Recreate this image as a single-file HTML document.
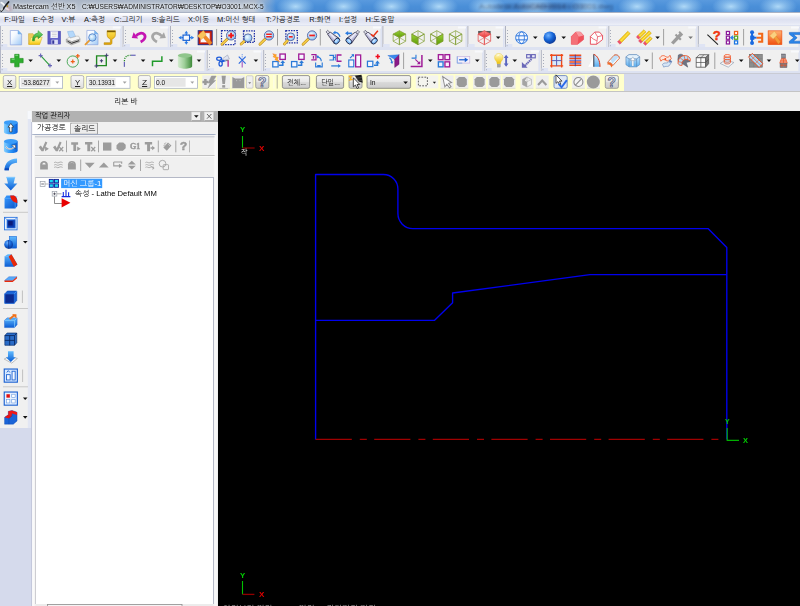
<!DOCTYPE html>
<html lang="ko"><head><meta charset="utf-8"><title>Mastercam</title>
<style>
html,body{margin:0;padding:0}
html{overflow:hidden;width:800px;height:606px}
body{width:800px;height:606px;position:relative;overflow:hidden;background:#f0f0f0;font-family:"Liberation Sans","NanumGothic","Noto Sans CJK KR",sans-serif;font-size:7.5px;color:#000;line-height:1}
.a{position:absolute}
.t{position:absolute;white-space:nowrap;transform-origin:0 0;z-index:2}
svg{position:absolute;overflow:visible}
</style></head><body>
<div class="a" style="left:0px;top:0px;width:800px;height:13px;background:radial-gradient(ellipse 19px 10px at 295.6px 6.5px,rgba(185,224,250,.9),rgba(185,224,250,.45) 45%,rgba(185,224,250,0)),radial-gradient(ellipse 19px 10px at 343.5px 6.5px,rgba(185,224,250,.9),rgba(185,224,250,.45) 45%,rgba(185,224,250,0)),radial-gradient(ellipse 19px 10px at 391.5px 6.5px,rgba(185,224,250,.9),rgba(185,224,250,.45) 45%,rgba(185,224,250,0)),radial-gradient(ellipse 19px 10px at 439px 6.5px,rgba(185,224,250,.9),rgba(185,224,250,.45) 45%,rgba(185,224,250,0)),radial-gradient(ellipse 19px 10px at 487px 6.5px,rgba(185,224,250,.9),rgba(185,224,250,.45) 45%,rgba(185,224,250,0)),radial-gradient(ellipse 19px 10px at 535px 6.5px,rgba(185,224,250,.9),rgba(185,224,250,.45) 45%,rgba(185,224,250,0)),radial-gradient(ellipse 19px 10px at 589px 6.5px,rgba(185,224,250,.9),rgba(185,224,250,.45) 45%,rgba(185,224,250,0)),radial-gradient(ellipse 19px 10px at 637px 6.5px,rgba(185,224,250,.9),rgba(185,224,250,.45) 45%,rgba(185,224,250,0)),radial-gradient(ellipse 19px 10px at 684px 6.5px,rgba(185,224,250,.9),rgba(185,224,250,.45) 45%,rgba(185,224,250,0)),radial-gradient(ellipse 19px 10px at 731px 6.5px,rgba(185,224,250,.9),rgba(185,224,250,.45) 45%,rgba(185,224,250,0)),radial-gradient(ellipse 19px 10px at 778px 6.5px,rgba(185,224,250,.9),rgba(185,224,250,.45) 45%,rgba(185,224,250,0)),linear-gradient(180deg,#5a9ade 0%,#4a8fd8 50%,#4789d2 100%)"></div>
<div class="a" style="left:476px;top:1px;width:140px;height:11px;background:radial-gradient(ellipse 68px 5px at 50% 50%,rgba(40,60,110,.4),rgba(40,60,110,0))"></div>
<div class="a" style="left:0px;top:0px;width:276px;height:13px;background:linear-gradient(90deg,#b3bdcb 0%,#b8c3d3 92%,rgba(184,195,211,0) 100%)"></div>
<div class="a" style="left:0px;top:0px;width:276px;height:13px;background:linear-gradient(180deg,rgba(160,172,190,.5),rgba(255,255,255,0) 45%,rgba(255,255,255,.2) 100%);-webkit-mask-image:linear-gradient(90deg,#000 92%,transparent 100%)"></div>
<div class="t" style="left:13px;top:2.5px;transform:scaleX(0.9685);color:#111;text-shadow:0 0 3px #fff,0 0 4px #fff">Mastercam 선반 X5</div>
<div class="t" style="left:81.75px;top:2.5px;transform:scaleX(0.8790);color:#111;text-shadow:0 0 3px #fff,0 0 4px #fff">C:₩USERS₩ADMINISTRATOR₩DESKTOP₩O3001.MCX-5</div>
<div class="t" style="left:479px;top:3px;transform:scaleX(1.1216);color:rgba(20,30,60,.45);filter:blur(1.1px);font-size:7px">Autodesk AutoCAD 2014 - O3001.dwg</div>
<div class="a" style="left:0px;top:13px;width:800px;height:12px;background:linear-gradient(180deg,#ffffff 0%,#fbfcfe 12%,#e6e9f5 38%,#dde1f1 55%,#e4e7f4 80%,#eceff8 100%)"></div>
<div class="a" style="left:0px;top:12.1px;width:800px;height:0.9px;background:#a9b2c4"></div>
<div class="a" style="left:0px;top:24.5px;width:800px;height:0.8px;background:#c8ccda"></div>
<div class="t" style="left:4.25px;top:15.9px;color:#111">F:파일</div>
<div class="t" style="left:33px;top:15.9px;color:#111">E:수정</div>
<div class="t" style="left:61.5px;top:15.9px;color:#111">V:뷰</div>
<div class="t" style="left:84px;top:15.9px;color:#111">A:측정</div>
<div class="t" style="left:114px;top:15.9px;color:#111">C:그리기</div>
<div class="t" style="left:151.5px;top:15.9px;color:#111">S:솔리드</div>
<div class="t" style="left:188px;top:15.9px;color:#111">X:이동</div>
<div class="t" style="left:217px;top:15.9px;color:#111">M:머신 형태</div>
<div class="t" style="left:265.8px;top:15.9px;color:#111">T:가공경로</div>
<div class="t" style="left:309.3px;top:15.9px;color:#111">R:화면</div>
<div class="t" style="left:339px;top:15.9px;color:#111">I:설정</div>
<div class="t" style="left:365.6px;top:15.9px;color:#111">H:도움말</div>
<div class="a" style="left:0px;top:25px;width:800px;height:48px;background:#dde2f1"></div>
<div class="a" style="left:0px;top:25.5px;width:800px;height:21.5px;background:#f0f0f0"></div>
<div class="a" style="left:0px;top:49.5px;width:800px;height:21.5px;background:#f0f0f0"></div>
<div class="a" style="left:0px;top:73px;width:800px;height:18.5px;background:#d5daec"></div>
<div class="a" style="left:0px;top:73px;width:623.5px;height:18.5px;background:#ffffcc"></div>
<div class="a" style="left:0px;top:91.5px;width:800px;height:19.5px;background:#f0f0f0"></div>
<div class="t" style="left:114px;top:97.6px;transform:scaleX(1.0157);">리본 바</div>
<div class="a" style="left:0px;top:111px;width:31px;height:495px;background:#d5daec"></div>
<div class="a" style="left:0px;top:111px;width:31px;height:317px;background:#f0f0f0"></div>
<div class="a" style="left:31px;top:111px;width:187px;height:495px;background:#f0f0f0"></div>
<div class="a" style="left:32px;top:111px;width:186px;height:10.5px;background:#b2b2b2"></div>
<div class="t" style="left:35px;top:111.6px;transform:scaleX(0.9426);">작업 관리자</div>
<div class="a" style="left:34.5px;top:177.3px;width:179.6px;height:426.8px;background:#fff;border:1px solid #b4b8c6;border-left:1.4px solid #cdcdd2;border-bottom:none;box-sizing:border-box"></div>
<svg style="left:0px;top:0px" width="12" height="13" viewBox="0 0 12 13" ><path d="M1.2,2.6 C3.5,3.2 5,6 6.3,8.6 L8.6,9.6" stroke="#f4f6f8" stroke-width="1.7" fill="none" stroke-linecap="round"/><path d="M8.6,2 C7,4 5.5,5.5 4.2,7.6 C3.2,9.2 2.4,10.2 1.2,11" stroke="#15171a" stroke-width="1.7" fill="none" stroke-linecap="round"/><path d="M6.4,6.2 L8,4.6 L8.2,6.4 L6.8,7.6Z" fill="#b8960e"/><path d="M1.3,10.6 L2.6,8.4" stroke="#e8e8e8" stroke-width="1.2"/></svg>
<div class="a" style="left:4px;top:4px;width:10px;height:8px;background:radial-gradient(ellipse at 50% 60%,rgba(200,120,130,.35),rgba(200,120,130,0) 70%)"></div>
<div class="a" style="left:0px;top:25.5px;width:0.9px;height:47px;background:#b4b8c6"></div>
<div class="a" style="left:0px;top:72.6px;width:800px;height:0.6px;background:#c9cbd4"></div>
<div class="a" style="left:0px;top:91.1px;width:800px;height:0.7px;background:#c4c4c4"></div>
<div class="a" style="left:217.5px;top:110.5px;width:583px;height:496px;background:#000"></div>
<svg style="left:0px;top:0px" width="800" height="606" viewBox="0 0 800 606" >
<g fill="none" stroke="#0000ee" stroke-width="1.35" stroke-linejoin="round">
<path d="M315.6,439.4 V174.5 H383.4 A14.5,14.5 0 0 1 397.9,189 V213.5 A15,15 0 0 0 412.9,228.6 H708 L726.8,247.4 V439.4"/>
<path d="M315.6,320.3 H434.6 L452.6,302.7 V293 L590,274.65 H726.8"/>
</g>
<path d="M315.6,439.4 H722" fill="none" stroke="#a00000" stroke-width="1.3" stroke-dasharray="36.2 8 7 7.4"/>
<!-- axis at part origin -->
<path d="M727.2,428 V440.3 H739" fill="none" stroke="#00b000" stroke-width="1.2"/>
<!-- top-left gnomon -->
<path d="M242.5,136 V148" stroke="#00c000" stroke-width="1.1" fill="none"/>
<path d="M242.6,148 H254.6" stroke="#700000" stroke-width="1.5" fill="none"/>
<!-- bottom-left gnomon -->
<path d="M242.5,581 V594.4" stroke="#00c000" stroke-width="1.1" fill="none"/>
<path d="M242.6,594.4 H254.4" stroke="#900000" stroke-width="1.3" fill="none"/>
</svg>
<div class="t" style="left:240px;top:126px;transform:scaleX(1.0368);font-weight:bold;font-size:7.5px;color:#00d000">Y</div>
<div class="t" style="left:258.6px;top:144.6px;transform:scaleX(1.0766);font-weight:bold;font-size:7.5px;color:#e00000">X</div>
<div class="t" style="left:241.3px;top:148.6px;transform:scaleX(0.8763);color:#fff;font-size:8px">작</div>
<div class="t" style="left:725px;top:418.2px;transform:scaleX(0.9171);font-weight:bold;font-size:7.5px;color:#00d000">Y</div>
<div class="t" style="left:743px;top:436.7px;transform:scaleX(0.9969);font-weight:bold;font-size:7.5px;color:#00d000">X</div>
<div class="t" style="left:240px;top:571.6px;transform:scaleX(1.0368);font-weight:bold;font-size:7.5px;color:#00d000">Y</div>
<div class="t" style="left:258.6px;top:590.6px;transform:scaleX(1.0766);font-weight:bold;font-size:7.5px;color:#e00000">X</div>
<div class="t" style="left:223px;top:604.6px;transform:scaleX(1.1131);color:#b4b4b4">화면보기:평면&nbsp; WCS:평면&nbsp; T/작업평면:평면</div>
<div class="t" style="left:7px;top:78.6px;transform:scaleX(1.0368);font-size:7.5px;color:#222;text-decoration:underline">X</div>
<div class="t" style="left:74.8px;top:78.6px;transform:scaleX(1.0368);font-size:7.5px;color:#222;text-decoration:underline">Y</div>
<div class="t" style="left:141.8px;top:78.6px;transform:scaleX(1.1320);font-size:7.5px;color:#222;text-decoration:underline">Z</div>
<div class="t" style="left:22px;top:78.8px;transform:scaleX(0.8170);color:#111">-53.86277</div>
<div class="t" style="left:88.6px;top:78.8px;transform:scaleX(0.8308);color:#111">30.13931</div>
<div class="t" style="left:156.4px;top:78.8px;transform:scaleX(0.8814);color:#111">0.0</div>
<div class="t" style="left:286.5px;top:78.6px;transform:scaleX(0.9332);color:#111">전체...</div>
<div class="t" style="left:320.5px;top:78.6px;transform:scaleX(0.9332);color:#111">단일...</div>
<div class="t" style="left:369.8px;top:78.7px;transform:scaleX(0.8938);color:#111">In</div>
<div class="t" style="left:36.9px;top:124.3px;transform:scaleX(1.0176);color:#000">가공경로</div>
<div class="t" style="left:73.6px;top:125.2px;transform:scaleX(1.0115);color:#000">솔리드</div>
<div class="t" style="left:130.3px;top:142.2px;transform:scaleX(0.8858);font-family:Liberation Serif,serif;font-weight:bold;font-size:9px;color:#9a9a9a;-webkit-text-stroke:.45px #9a9a9a">G1</div>
<div class="t" style="left:180.4px;top:141.2px;transform:scaleX(1.0691);font-weight:bold;font-size:11px;color:#9a9a9a;-webkit-text-stroke:.5px #9a9a9a">?</div>
<div class="t" style="left:62.5px;top:179.9px;transform:scaleX(1.0392);color:#fff">머신 그룹-1</div>
<div class="t" style="left:74.6px;top:189.9px;transform:scaleX(1.0229);color:#000">속성 - Lathe Default MM</div>
<svg style="left:0;top:0" width="800" height="606" viewBox="0 0 800 606"><defs><linearGradient id="gDoc" x1="0" y1="0" x2="1" y2="1"><stop offset="0" stop-color="#ffffff"/><stop offset="0.35" stop-color="#f4f9ff"/><stop offset="1" stop-color="#9cc8f6"/></linearGradient><linearGradient id="gFold" x1="0" y1="0" x2="0" y2="1"><stop offset="0" stop-color="#fff6b0"/><stop offset="0.5" stop-color="#fde25a"/><stop offset="1" stop-color="#f4c40c"/></linearGradient><linearGradient id="gGreenArrow" x1="0" y1="0" x2="0" y2="1"><stop offset="0" stop-color="#7fe07f"/><stop offset="1" stop-color="#1f9a1f"/></linearGradient><linearGradient id="gPrinter" x1="0" y1="0" x2="0" y2="1"><stop offset="0" stop-color="#f4f4f4"/><stop offset="1" stop-color="#8e8e8e"/></linearGradient><radialGradient id="gLens" cx="0.4" cy="0.4" r="0.7"><stop offset="0" stop-color="#f2fbff"/><stop offset="1" stop-color="#7db9ee"/></radialGradient><radialGradient id="gSphere" cx="0.38" cy="0.32" r="0.75"><stop offset="0" stop-color="#6fb2ff"/><stop offset="0.5" stop-color="#1565d8"/><stop offset="1" stop-color="#0a2f8a"/></radialGradient><linearGradient id="gYel" x1="0" y1="0" x2="0" y2="1"><stop offset="0" stop-color="#ffe34d"/><stop offset="1" stop-color="#e0a000"/></linearGradient><linearGradient id="gGrn" x1="0" y1="0" x2="0" y2="1"><stop offset="0" stop-color="#9ad23a"/><stop offset="1" stop-color="#5c9e00"/></linearGradient><linearGradient id="gCyl" x1="0" y1="0" x2="1" y2="0"><stop offset="0" stop-color="#d4ecd0"/><stop offset="0.45" stop-color="#9fd09a"/><stop offset="1" stop-color="#3e8a3a"/></linearGradient><linearGradient id="gBlueBox" x1="0" y1="0" x2="0" y2="1"><stop offset="0" stop-color="#6db6ff"/><stop offset="1" stop-color="#0b56c4"/></linearGradient><linearGradient id="gBlueH" x1="0" y1="0" x2="1" y2="0"><stop offset="0" stop-color="#86d0ff"/><stop offset="0.5" stop-color="#2a94f8"/><stop offset="1" stop-color="#0a60d8"/></linearGradient><linearGradient id="gRed" x1="0" y1="0" x2="0" y2="1"><stop offset="0" stop-color="#ff9a9a"/><stop offset="1" stop-color="#e83030"/></linearGradient><linearGradient id="gOrange" x1="0" y1="0" x2="0" y2="1"><stop offset="0" stop-color="#ffb070"/><stop offset="1" stop-color="#f05010"/></linearGradient><linearGradient id="gBulb" x1="0" y1="0" x2="0" y2="1"><stop offset="0" stop-color="#fffbd0"/><stop offset="1" stop-color="#f0c000"/></linearGradient><linearGradient id="gTube" x1="0" y1="0" x2="0" y2="1"><stop offset="0" stop-color="#dff1ff"/><stop offset="1" stop-color="#58aef0"/></linearGradient><linearGradient id="gTele" x1="1" y1="0" x2="0" y2="1"><stop offset="0" stop-color="#1c1a38"/><stop offset="0.28" stop-color="#8886b0"/><stop offset="0.45" stop-color="#f0f0fc"/><stop offset="0.7" stop-color="#8c8ab8"/><stop offset="1" stop-color="#181630"/></linearGradient><linearGradient id="gBtn" x1="0" y1="0" x2="0" y2="1"><stop offset="0" stop-color="#f6f6f6"/><stop offset="0.5" stop-color="#e6e6e6"/><stop offset="0.55" stop-color="#d8d8d8"/><stop offset="1" stop-color="#cccccc"/></linearGradient><linearGradient id="gBtn2" x1="0" y1="0" x2="0" y2="1"><stop offset="0" stop-color="#fafafa"/><stop offset="1" stop-color="#dedede"/></linearGradient><linearGradient id="gBlueV" x1="0" y1="0" x2="0" y2="1"><stop offset="0" stop-color="#62bcff"/><stop offset="1" stop-color="#0a5cd4"/></linearGradient><linearGradient id="gBlueD" x1="0" y1="0" x2="1" y2="1"><stop offset="0" stop-color="#3a9cff"/><stop offset="1" stop-color="#0650c8"/></linearGradient></defs><rect x="0.80" y="44.00" width="6.5" height="3" fill="#dfe4f4"/>
<rect x="2" y="30" width="1" height="1" fill="#a8acba"/>
<rect x="2" y="33" width="1" height="1" fill="#a8acba"/>
<rect x="2" y="36" width="1" height="1" fill="#a8acba"/>
<rect x="2" y="39" width="1" height="1" fill="#a8acba"/>
<rect x="2" y="42" width="1" height="1" fill="#a8acba"/>
<rect x="1.60" y="45.20" width="1" height="1" fill="#a8acba"/>
<rect x="120.20" y="26.50" width="1.6" height="20.50" fill="#dde2f2"/>
<rect x="112.80" y="26.50" width="8" height="2" fill="#f8f9fc"/>
<rect x="122.60" y="26.00" width="1" height="21.00" fill="#aeb2c0"/>
<rect x="123.40" y="44.00" width="6.5" height="3" fill="#dfe4f4"/>
<rect x="125" y="30" width="1" height="1" fill="#a8acba"/>
<rect x="125" y="33" width="1" height="1" fill="#a8acba"/>
<rect x="125" y="36" width="1" height="1" fill="#a8acba"/>
<rect x="125" y="39" width="1" height="1" fill="#a8acba"/>
<rect x="125" y="42" width="1" height="1" fill="#a8acba"/>
<rect x="124.20" y="45.20" width="1" height="1" fill="#a8acba"/>
<rect x="167.70" y="26.50" width="1.6" height="20.50" fill="#dde2f2"/>
<rect x="160.30" y="26.50" width="8" height="2" fill="#f8f9fc"/>
<rect x="170.00" y="26.00" width="1" height="21.00" fill="#aeb2c0"/>
<rect x="170.80" y="44.00" width="6.5" height="3" fill="#dfe4f4"/>
<rect x="172" y="30" width="1" height="1" fill="#a8acba"/>
<rect x="172" y="33" width="1" height="1" fill="#a8acba"/>
<rect x="172" y="36" width="1" height="1" fill="#a8acba"/>
<rect x="172" y="39" width="1" height="1" fill="#a8acba"/>
<rect x="172" y="42" width="1" height="1" fill="#a8acba"/>
<rect x="171.60" y="45.20" width="1" height="1" fill="#a8acba"/>
<rect x="380.40" y="26.50" width="1.6" height="20.50" fill="#dde2f2"/>
<rect x="373.00" y="26.50" width="8" height="2" fill="#f8f9fc"/>
<rect x="382.40" y="26.00" width="1" height="21.00" fill="#aeb2c0"/>
<rect x="383.20" y="44.00" width="6.5" height="3" fill="#dfe4f4"/>
<rect x="465.40" y="26.50" width="1.6" height="20.50" fill="#dde2f2"/>
<rect x="458.00" y="26.50" width="8" height="2" fill="#f8f9fc"/>
<rect x="467.40" y="26.00" width="1" height="21.00" fill="#aeb2c0"/>
<rect x="468.20" y="44.00" width="6.5" height="3" fill="#dfe4f4"/>
<rect x="503.00" y="26.50" width="1.6" height="20.50" fill="#dde2f2"/>
<rect x="495.60" y="26.50" width="8" height="2" fill="#f8f9fc"/>
<rect x="505.00" y="26.00" width="1" height="21.00" fill="#aeb2c0"/>
<rect x="505.80" y="44.00" width="6.5" height="3" fill="#dfe4f4"/>
<rect x="507" y="30" width="1" height="1" fill="#a8acba"/>
<rect x="507" y="33" width="1" height="1" fill="#a8acba"/>
<rect x="507" y="36" width="1" height="1" fill="#a8acba"/>
<rect x="507" y="39" width="1" height="1" fill="#a8acba"/>
<rect x="507" y="42" width="1" height="1" fill="#a8acba"/>
<rect x="506.60" y="45.20" width="1" height="1" fill="#a8acba"/>
<rect x="606.00" y="26.50" width="1.6" height="20.50" fill="#dde2f2"/>
<rect x="598.60" y="26.50" width="8" height="2" fill="#f8f9fc"/>
<rect x="608.30" y="26.00" width="1" height="21.00" fill="#aeb2c0"/>
<rect x="609.10" y="44.00" width="6.5" height="3" fill="#dfe4f4"/>
<rect x="610" y="30" width="1" height="1" fill="#a8acba"/>
<rect x="610" y="33" width="1" height="1" fill="#a8acba"/>
<rect x="610" y="36" width="1" height="1" fill="#a8acba"/>
<rect x="610" y="39" width="1" height="1" fill="#a8acba"/>
<rect x="610" y="42" width="1" height="1" fill="#a8acba"/>
<rect x="609.90" y="45.20" width="1" height="1" fill="#a8acba"/>
<rect x="695.60" y="26.50" width="1.6" height="20.50" fill="#dde2f2"/>
<rect x="688.20" y="26.50" width="8" height="2" fill="#f8f9fc"/>
<rect x="697.80" y="26.00" width="1" height="21.00" fill="#aeb2c0"/>
<rect x="698.60" y="44.00" width="6.5" height="3" fill="#dfe4f4"/>
<rect x="798.40" y="26.50" width="1.6" height="20.50" fill="#dde2f2"/>
<rect x="791.00" y="26.50" width="8" height="2" fill="#f8f9fc"/>
<g transform="translate(8.50 30.20) scale(0.6250)"><path d="M2.9,0.5 H15.2 L21,6.2 V23.5 H2.9 Z" fill="url(#gDoc)" stroke="#8ea4de" stroke-width="1.1" /><path d="M15.2,0.5 V6.2 H21 Z" fill="#7ab8f0" stroke="#6a98dc" stroke-width="0.6" /></g>
<g transform="translate(27.80 30.20) scale(0.6250)"><path d="M1.2,5.5 h7 l2,2.5 h8.5 v14.5 h-17.5z" fill="#ecc85a" stroke="#c8a030" stroke-width="0.8" /><path d="M1.6,22.8 L5,11.5 H23 L19,22.8 Z" fill="url(#gFold)" stroke="#d8ae20" stroke-width="0.8" /><path d="M7.5,17 C7.5,9 11.5,4.8 16.5,4.8 V0.8 L23.8,7.2 L16.5,13.6 V9.8 C13,9.8 10.8,12 10.5,17 Z" fill="url(#gGreenArrow)" stroke="#1d8a1d" stroke-width="0.8" /></g>
<g transform="translate(46.50 30.20) scale(0.6250)"><rect x="2.2" y="1.6" width="20.4" height="20.6" fill="#5a5ac4" stroke="#4848b0" stroke-width="0.8" /><rect x="6.6" y="1.8" width="11.6" height="10.6" fill="#ffffff" stroke="#d0d0e8" stroke-width="0.5" /><path d="M8.4,4.4H16.4M8.4,7H16.4M8.4,9.6H16.4" fill="none" stroke="#b4b4c0" stroke-width="1" /><rect x="8" y="15.2" width="10.2" height="7" fill="#dcdff6" stroke="none" stroke-width="1" /><rect x="9.2" y="16.2" width="3.2" height="5.6" fill="#34349a" stroke="none" stroke-width="1" /></g>
<g transform="translate(65.50 30.20) scale(0.6250)"><path d="M3.2,2.2 L12,1.2 L16,10 L6.6,12.6 Z" fill="#b4d8fb" stroke="#86b0e0" stroke-width="0.8" /><path d="M1,14.5 L6.5,10.8 L7.5,12.6 L16,10.2 L15.5,9.6 L21,9.5 L23.3,14 L10,18.5 Z" fill="#f4f4f4" stroke="#9a9a9a" stroke-width="0.7" /><path d="M1,14.5 L10,18.5 L23.3,14 L23,18.6 L9.2,23.6 L1.4,19.2 Z" fill="#c4c4c4" stroke="#808080" stroke-width="0.7" /><path d="M3.2,17.6 L9.6,21 L21.6,16.8" fill="none" stroke="#202020" stroke-width="1.5" /></g>
<g transform="translate(84.50 30.20) scale(0.6250)"><path d="M3.8,0.4 H16 L21.6,6 V23.2 H3.8 Z" fill="url(#gDoc)" stroke="#8ea4de" stroke-width="1.1" /><path d="M16,0.4 V6 H21.6 Z" fill="#7ab8f0" stroke="#6a98dc" stroke-width="0.6" /><path d="M1.6,22.6 L8.4,16" fill="none" stroke="#e89a30" stroke-width="3" stroke-linecap="round"/><circle cx="12.6" cy="11.6" r="5.9" fill="url(#gLens)" stroke="#5a86cc" stroke-width="1.5" /></g>
<g transform="translate(103.00 30.20) scale(0.6250)"><path d="M6.6,0.8 H19.8 V7.5 C19.8,12.5 15.5,13 14.4,14.6 V19.6 C14.4,22.4 13,23 11,23 H1.8 V20 H11 C11.6,20 11.8,19.8 11.8,19.4 V14.6 C10.5,13 6.6,12.5 6.6,7.5 Z" fill="url(#gYel)" stroke="#b88400" stroke-width="0.9" /><path d="M6.6,2 H19.8" fill="none" stroke="#7a5a00" stroke-width="2.4" /></g>
<g transform="translate(131.90 30.20) scale(0.6250)"><path d="M6.5,9.5 C9.5,4.5 17,3.2 20,7 C23,11 19.5,16 14,19" fill="none" stroke="#c414b2" stroke-width="4.4" /><path d="M2.8,3.2 L-0.2,12.6 L10,13.2 Z" fill="#c414b2" stroke="none" stroke-width="1" /></g>
<g transform="translate(150.70 30.20) scale(0.6250)"><g transform="translate(24 0) scale(-1 1)"><path d="M6.5,9.5 C9.5,4.5 17,3.2 20,7 C23,11 19.5,16 14,19" fill="none" stroke="#a6a6a6" stroke-width="4.4" /><path d="M2.8,3.2 L-0.2,12.6 L10,13.2 Z" fill="#a6a6a6" stroke="none" stroke-width="1" /></g></g>
<g transform="translate(178.80 30.20) scale(0.6250)"><path d="M12,0.8 L15,5.4 H9Z M12,23.4 L15,18.8 H9Z M-0.6,12 L4.2,9 V15Z M24.6,12 L19.8,9 V15Z" fill="#2a7ae6" stroke="none" stroke-width="1" /><path d="M12,5V19 M4,12H20" fill="none" stroke="#2a7ae6" stroke-width="2" /><rect x="6.8" y="7.8" width="10.4" height="8.4" fill="#f4f8fe" stroke="#1a62d4" stroke-width="1.9" /></g>
<g transform="translate(197.80 30.20) scale(0.6250)"><rect x="0.6" y="0.8" width="22.4" height="22.4" fill="#c81c08" stroke="#1a2a8a" stroke-width="1.5" /><rect x="4.2" y="4.4" width="15.2" height="15.2" fill="#f8f8f8" stroke="#e06050" stroke-width="0.8" /><path d="M8.5,11.5 L12.5,8 L23,20 L19,24 Z" fill="#f08828" stroke="#d86c10" stroke-width="0.6" /><path d="M-0.8,9.3 L9,0.2 L13.2,7 L6,15 Z" fill="#f8c45c" stroke="#e8a030" stroke-width="0.6" /></g>
<path d="M216.60,29.00 V45.50" stroke="#a0a0a0" stroke-width="1" fill="none"/>
<g transform="translate(220.90 30.20) scale(0.6250)"><rect x="1" y="0.6" width="21.6" height="22.4" fill="#f6f6f6" stroke="#1c2fa6" stroke-width="2" stroke-dasharray="2.4 1.7"/><path d="M1.80,22.40 L10.76,13.75" fill="none" stroke="#b8861a" stroke-width="4.4" stroke-linecap="round"/><path d="M1.80,22.40 L10.76,13.75" fill="none" stroke="#f4cc48" stroke-width="2.8" stroke-linecap="round"/><circle cx="16.3" cy="8.4" r="7.4" fill="url(#gLens)" stroke="#44589e" stroke-width="1.3" /><path d="M11.8,8.4H20.8M16.3,3.9V12.9" fill="none" stroke="#f01818" stroke-width="3" /></g>
<g transform="translate(240.00 30.20) scale(0.6250)"><rect x="5.6" y="1.2" width="17.4" height="18.4" fill="#f0f0f0" stroke="#1c2fa6" stroke-width="2" stroke-dasharray="2.4 1.7"/><path d="M1.80,22.20 L7.82,16.78" fill="none" stroke="#b8861a" stroke-width="4.4" stroke-linecap="round"/><path d="M1.80,22.20 L7.82,16.78" fill="none" stroke="#f4cc48" stroke-width="2.8" stroke-linecap="round"/><circle cx="12.8" cy="12.3" r="6.4" fill="url(#gLens)" stroke="#44589e" stroke-width="1.3" /></g>
<g transform="translate(258.80 30.20) scale(0.6250)"><path d="M1.80,22.40 L10.76,13.75" fill="none" stroke="#b8861a" stroke-width="4.4" stroke-linecap="round"/><path d="M1.80,22.40 L10.76,13.75" fill="none" stroke="#f4cc48" stroke-width="2.8" stroke-linecap="round"/><circle cx="16.3" cy="8.4" r="7.4" fill="url(#gLens)" stroke="#44589e" stroke-width="1.3" /><path d="M11.8,6.4H20.8M11.8,10.6H20.8" fill="none" stroke="#ee2020" stroke-width="2.3" /></g>
<path d="M277.50,29.00 V45.50" stroke="#a0a0a0" stroke-width="1" fill="none"/>
<g transform="translate(283.10 30.20) scale(0.6250)"><rect x="4.4" y="0.8" width="18.4" height="19.6" fill="#f0f0f0" stroke="#1c2fa6" stroke-width="2" stroke-dasharray="2.4 1.7"/><path d="M2.00,22.20 L7.98,15.46" fill="none" stroke="#b8861a" stroke-width="4.4" stroke-linecap="round"/><path d="M2.00,22.20 L7.98,15.46" fill="none" stroke="#f4cc48" stroke-width="2.8" stroke-linecap="round"/><circle cx="12.3" cy="10.6" r="6.2" fill="url(#gLens)" stroke="#44589e" stroke-width="1.3" /><path d="M9.3,10.6H15.3" fill="none" stroke="#ee2020" stroke-width="2.6" /></g>
<g transform="translate(301.90 30.20) scale(0.6250)"><path d="M1.80,22.40 L10.76,13.75" fill="none" stroke="#b8861a" stroke-width="4.4" stroke-linecap="round"/><path d="M1.80,22.40 L10.76,13.75" fill="none" stroke="#f4cc48" stroke-width="2.8" stroke-linecap="round"/><circle cx="16.3" cy="8.4" r="7.4" fill="url(#gLens)" stroke="#44589e" stroke-width="1.3" /><path d="M11.8,8.4H20.8" fill="none" stroke="#ee2020" stroke-width="2.8" /></g>
<path d="M320.30,29.00 V45.50" stroke="#a0a0a0" stroke-width="1" fill="none"/>
<g transform="translate(325.90 30.20) scale(0.6250)"><path d="M0.2,2.8 L2.8,0.2 L6.4,3.6 L3.6,6.4Z" fill="#d8d8e4" stroke="#2a2a40" stroke-width="0.9" /><path d="M6.9,2.9 L21,13 L13,21 L2.9,6.9 Z" fill="url(#gTele)" stroke="#14142a" stroke-width="1" /><ellipse cx="17.4" cy="17.4" rx="5.4" ry="3.7" transform="rotate(-45 17.4 17.4)" fill="#86c0fa" stroke="#0c1030" stroke-width="1.3"/><ellipse cx="16.6" cy="16.8" rx="2.6" ry="1.6" transform="rotate(-45 16.6 16.8)" fill="#c8e4ff"/><path d="M13.5,4 C17,2.5 21,5 22.5,10.5" fill="none" stroke="#2a7be0" stroke-width="2.2" /><path d="M10.5,5 L15,0.8 L15.6,6.2Z" fill="#2a7be0" stroke="none" stroke-width="1" /></g>
<g transform="translate(344.70 30.20) scale(0.6250)"><g transform="translate(24 0) scale(-1 1)"><path d="M0.2,2.8 L2.8,0.2 L6.4,3.6 L3.6,6.4Z" fill="#d8d8e4" stroke="#2a2a40" stroke-width="0.9" /><path d="M6.9,2.9 L21,13 L13,21 L2.9,6.9 Z" fill="url(#gTele)" stroke="#14142a" stroke-width="1" /><ellipse cx="17.4" cy="17.4" rx="5.4" ry="3.7" transform="rotate(-45 17.4 17.4)" fill="#86c0fa" stroke="#0c1030" stroke-width="1.3"/><ellipse cx="16.6" cy="16.8" rx="2.6" ry="1.6" transform="rotate(-45 16.6 16.8)" fill="#c8e4ff"/></g><path d="M4,5 H11.5" fill="none" stroke="#2a7be0" stroke-width="2.6" /><path d="M0.5,5 L5.5,1.4 V8.6Z" fill="#2a7be0" stroke="none" stroke-width="1" /></g>
<g transform="translate(363.50 30.20) scale(0.6250)"><path d="M0.2,2.8 L2.8,0.2 L6.4,3.6 L3.6,6.4Z" fill="#d8d8e4" stroke="#2a2a40" stroke-width="0.9" /><path d="M6.9,2.9 L21,13 L13,21 L2.9,6.9 Z" fill="url(#gTele)" stroke="#14142a" stroke-width="1" /><ellipse cx="17.4" cy="17.4" rx="5.4" ry="3.7" transform="rotate(-45 17.4 17.4)" fill="#86c0fa" stroke="#0c1030" stroke-width="1.3"/><ellipse cx="16.6" cy="16.8" rx="2.6" ry="1.6" transform="rotate(-45 16.6 16.8)" fill="#c8e4ff"/><path d="M12,6.5 L15.5,9.5 L23,1" fill="none" stroke="#e83010" stroke-width="2.4" /></g>
<g transform="translate(391.90 30.20) scale(0.6250)"><path d="M12,0.8 L22,6.2 L12,11.8 L2,6.2 Z" fill="url(#gGrn)" stroke="none" stroke-width="1" /><path d="M12,0.8 V11.8 M2,17.6 L12,11.8 L22,17.6" fill="none" stroke="#7e9c2e" stroke-width="0.9" /><path d="M12,0.8 L22,6.2 L12,11.8 L2,6.2 ZM2,6.2 L12,11.8 V23.2 L2,17.6 ZM22,6.2 L12,11.8 V23.2 L22,17.6 Z" fill="none" stroke="#7e9c2e" stroke-width="1.15" stroke-linejoin="round"/></g>
<g transform="translate(410.50 30.20) scale(0.6250)"><path d="M2,6.2 L12,11.8 V23.2 L2,17.6 Z" fill="url(#gGrn)" stroke="none" stroke-width="1" /><path d="M12,0.8 V11.8 M2,17.6 L12,11.8 L22,17.6" fill="none" stroke="#7e9c2e" stroke-width="0.9" /><path d="M12,0.8 L22,6.2 L12,11.8 L2,6.2 ZM2,6.2 L12,11.8 V23.2 L2,17.6 ZM22,6.2 L12,11.8 V23.2 L22,17.6 Z" fill="none" stroke="#7e9c2e" stroke-width="1.15" stroke-linejoin="round"/></g>
<g transform="translate(429.30 30.20) scale(0.6250)"><path d="M22,6.2 L12,11.8 V23.2 L22,17.6 Z" fill="url(#gGrn)" stroke="none" stroke-width="1" /><path d="M12,0.8 V11.8 M2,17.6 L12,11.8 L22,17.6" fill="none" stroke="#7e9c2e" stroke-width="0.9" /><path d="M12,0.8 L22,6.2 L12,11.8 L2,6.2 ZM2,6.2 L12,11.8 V23.2 L2,17.6 ZM22,6.2 L12,11.8 V23.2 L22,17.6 Z" fill="none" stroke="#7e9c2e" stroke-width="1.15" stroke-linejoin="round"/></g>
<g transform="translate(448.10 30.20) scale(0.6250)"><path d="M12,0.8 V11.8 M2,17.6 L12,11.8 L22,17.6" fill="none" stroke="#7e9c2e" stroke-width="0.9" /><path d="M12,0.8 L22,6.2 L12,11.8 L2,6.2 ZM2,6.2 L12,11.8 V23.2 L2,17.6 ZM22,6.2 L12,11.8 V23.2 L22,17.6 Z" fill="none" stroke="#7e9c2e" stroke-width="1.15" stroke-linejoin="round"/></g>
<g transform="translate(476.90 30.20) scale(0.6250)"><rect x="2" y="1.2" width="20" height="5.5" fill="#5a5a5a" stroke="none" stroke-width="1" /><path d="M12,0.8 L22,6.2 L12,11.8 L2,6.2 Z" fill="url(#gRed)" stroke="none" stroke-width="1" /><path d="M12,0.8 V11.8 M2,17.6 L12,11.8 L22,17.6" fill="none" stroke="#e45050" stroke-width="0.9" /><path d="M12,0.8 L22,6.2 L12,11.8 L2,6.2 ZM2,6.2 L12,11.8 V23.2 L2,17.6 ZM22,6.2 L12,11.8 V23.2 L22,17.6 Z" fill="none" stroke="#e45050" stroke-width="1.2" stroke-linejoin="round"/></g>
<path d="M495.90,36.40 h4.6 l-2.3,2.6z" fill="#111"/>
<g transform="translate(514.10 30.20) scale(0.6250)"><circle cx="12" cy="12" r="9.5" fill="#f4f8ff" stroke="#2a74dc" stroke-width="1.5" /><ellipse cx="12" cy="12" rx="4.5" ry="9.5" fill="none" stroke="#2a74dc" stroke-width="1.4"/><path d="M3,9 H21 M3,15.5 H21" fill="none" stroke="#2a74dc" stroke-width="1.6" /></g>
<path d="M533.00,36.40 h4.6 l-2.3,2.6z" fill="#111"/>
<g transform="translate(542.30 30.20) scale(0.6250)"><circle cx="12" cy="12" r="10" fill="url(#gSphere)" stroke="none" stroke-width="1" /></g>
<path d="M561.40,36.40 h4.6 l-2.3,2.6z" fill="#111"/>
<g transform="translate(569.80 30.20) scale(0.6250)"><path d="M2.5,10 L9.5,3 L17,3 L22,8.5 V15 L12.5,22.5 L2.5,22.5 Z" fill="#f0505a" stroke="#e84050" stroke-width="1" /><path d="M9.5,3 L17,3 L22,8.5 L14,10.5 Z" fill="#f89aa0" stroke="none" stroke-width="1" /><path d="M2.5,10 L9.5,3 L14,10.5 L12.5,22.5 L2.5,22.5Z" fill="#f47078" stroke="none" stroke-width="1" /></g>
<g transform="translate(588.80 30.20) scale(0.6250)"><path d="M2.5,10 L9.5,3 L17,3 L22,8.5 V15 L12.5,22.5 L2.5,22.5 Z" fill="#fdfdfd" stroke="#e84858" stroke-width="1.5" /><path d="M9.5,3 L14,10.5 L22,8.5 M14,10.5 L12.5,22.5 M2.5,10 L7,14 L12.8,17" fill="none" stroke="#e84858" stroke-width="1.2" /></g>
<g transform="translate(616.50 30.20) scale(0.6250)"><path d="M3.96,16.07 L18.03,1.58 L21.97,5.42 L7.91,19.90 Z" fill="#f6cc1c" stroke="#b89000" stroke-width="0.6" /><path d="M5.94,17.99 L20.00,3.50" fill="none" stroke="#fff07a" stroke-width="1.2" /><path d="M1.53,18.58 L3.96,16.07 L7.91,19.90 L5.47,22.42 Z" fill="#f0506a" stroke="#d03050" stroke-width="0.5" /></g>
<g transform="translate(636.50 30.20) scale(0.6250)"><path d="M2.30,8.27 L11.77,-0.80 L15.23,2.80 L5.76,11.88 Z" fill="#f6cc1c" stroke="#b89000" stroke-width="0.6" /><path d="M4.03,10.08 L13.50,1.00" fill="none" stroke="#fff07a" stroke-width="1.2" /><path d="M-0.23,10.70 L2.30,8.27 L5.76,11.88 L3.23,14.30 Z" fill="#f0506a" stroke="#d03050" stroke-width="0.5" /><path d="M5.70,14.64 L20.15,1.03 L23.85,4.97 L9.40,18.57 Z" fill="#f6cc1c" stroke="#b89000" stroke-width="0.6" /><path d="M7.55,16.60 L22.00,3.00" fill="none" stroke="#fff07a" stroke-width="1.2" /><path d="M3.15,17.03 L5.70,14.64 L9.40,18.57 L6.85,20.97 Z" fill="#f0506a" stroke="#d03050" stroke-width="0.5" /><path d="M13.31,18.27 L21.77,10.19 L25.23,13.81 L16.76,21.89 Z" fill="#f6cc1c" stroke="#b89000" stroke-width="0.6" /><path d="M15.03,20.08 L23.50,12.00" fill="none" stroke="#fff07a" stroke-width="1.2" /><path d="M10.77,20.69 L13.31,18.27 L16.76,21.89 L14.23,24.31 Z" fill="#f0506a" stroke="#d03050" stroke-width="0.5" /></g>
<path d="M655.30,36.40 h4.6 l-2.3,2.6z" fill="#111"/>
<path d="M663.60,29.00 V45.50" stroke="#a0a0a0" stroke-width="1" fill="none"/>
<g transform="translate(669.10 30.20) scale(0.6250)"><path d="M3,19.5 L17,4.5 L21,8.5 L7,23 Z" fill="#9c9c9c" stroke="none" stroke-width="1" /><path d="M11.5,5.5 L20,14 L17.5,16.5 L9,8 Z" fill="#9c9c9c" stroke="none" stroke-width="1" /><path d="M16,2.5 L21.5,8" fill="none" stroke="#9c9c9c" stroke-width="3" /></g>
<path d="M688.30,36.40 h4.6 l-2.3,2.6z" fill="#777"/>
<g transform="translate(705.50 30.20) scale(0.6250)"><path d="M3,7 L20,23" fill="none" stroke="#222" stroke-width="1.8" /><text x="11.5" y="15.5" font-size="21" font-weight="bold" fill="#f03810" stroke="#f03810" stroke-width=".7" font-family="Liberation Sans,sans-serif">?</text></g>
<g transform="translate(724.50 30.20) scale(0.6250)"><rect x="3" y="2" width="5" height="5" fill="#fff" stroke="#8a1a9a" stroke-width="2" /><rect x="3" y="9.5" width="5" height="5" fill="#fff" stroke="#8a1a9a" stroke-width="2" /><rect x="3" y="17" width="5" height="5" fill="#fff" stroke="#8a1a9a" stroke-width="2" /><rect x="16" y="2" width="5" height="5" fill="#fff" stroke="#f06018" stroke-width="2" /><rect x="16" y="9.5" width="5" height="5" fill="#fff" stroke="#5aa51a" stroke-width="2" /><rect x="16" y="17" width="5" height="5" fill="#fff" stroke="#1a74e0" stroke-width="2" /><path d="M9.5,12 L13,9 V15Z M12,12 H16" fill="#2a84e8" stroke="#2a84e8" stroke-width="1.4" /></g>
<path d="M743.60,29.00 V45.50" stroke="#a0a0a0" stroke-width="1" fill="none"/>
<g transform="translate(748.80 30.20) scale(0.6250)"><path d="M5.2,3 V21" fill="none" stroke="#1a6ae0" stroke-width="3.2" /><circle cx="5.2" cy="3.4" r="3.2" fill="#1a6ae0" stroke="none" stroke-width="1" /><circle cx="5.2" cy="20.6" r="3.2" fill="#1a6ae0" stroke="none" stroke-width="1" /><rect x="2.2" y="8.6" width="6.6" height="6.8" fill="#1a6ae0" stroke="none" stroke-width="1" /><path d="M8,12 H12.5" fill="none" stroke="#1a6ae0" stroke-width="3" /><path d="M12.5,12 H20 M15,5.6 H21.4 V18.4 H15" fill="none" stroke="#f26a1a" stroke-width="3.4" /></g>
<g transform="translate(767.50 30.20) scale(0.6250)"><rect x="1" y="1" width="22" height="22" fill="url(#gOrange)" stroke="#ec4c0c" stroke-width="1" /><path d="M9.5,11.5 L13.5,8.5 L21,18.5 L17.5,22.5 Z" fill="#f49a3a" stroke="#d87418" stroke-width="0.6" /><path d="M3.5,9 L11,1.5 L15.5,7.5 L9,14 Z" fill="#fad080" stroke="#e8a040" stroke-width="0.6" /></g>
<g transform="translate(787.50 30.20) scale(0.6250)"><path d="M3,3.5 H21 V7 H9.5 L15.5,12 L9.5,17.5 H21 V21 H3 V17.5 L10,12 L3,6.5 Z" fill="#2a84e8" stroke="#0a58c0" stroke-width="0.8" /></g>
<rect x="0.80" y="68.00" width="6.5" height="3" fill="#dfe4f4"/>
<rect x="2" y="54" width="1" height="1" fill="#a8acba"/>
<rect x="2" y="57" width="1" height="1" fill="#a8acba"/>
<rect x="2" y="60" width="1" height="1" fill="#a8acba"/>
<rect x="2" y="63" width="1" height="1" fill="#a8acba"/>
<rect x="2" y="66" width="1" height="1" fill="#a8acba"/>
<rect x="1.60" y="69.20" width="1" height="1" fill="#a8acba"/>
<rect x="204.40" y="50.50" width="1.6" height="20.50" fill="#dde2f2"/>
<rect x="197.00" y="50.50" width="8" height="2" fill="#f8f9fc"/>
<rect x="206.70" y="50.00" width="1" height="21.00" fill="#aeb2c0"/>
<rect x="207.50" y="68.00" width="6.5" height="3" fill="#dfe4f4"/>
<rect x="209" y="54" width="1" height="1" fill="#a8acba"/>
<rect x="209" y="57" width="1" height="1" fill="#a8acba"/>
<rect x="209" y="60" width="1" height="1" fill="#a8acba"/>
<rect x="209" y="63" width="1" height="1" fill="#a8acba"/>
<rect x="209" y="66" width="1" height="1" fill="#a8acba"/>
<rect x="208.30" y="69.20" width="1" height="1" fill="#a8acba"/>
<rect x="260.80" y="50.50" width="1.6" height="20.50" fill="#dde2f2"/>
<rect x="253.40" y="50.50" width="8" height="2" fill="#f8f9fc"/>
<rect x="263.20" y="50.00" width="1" height="21.00" fill="#aeb2c0"/>
<rect x="264.00" y="68.00" width="6.5" height="3" fill="#dfe4f4"/>
<rect x="265" y="54" width="1" height="1" fill="#a8acba"/>
<rect x="265" y="57" width="1" height="1" fill="#a8acba"/>
<rect x="265" y="60" width="1" height="1" fill="#a8acba"/>
<rect x="265" y="63" width="1" height="1" fill="#a8acba"/>
<rect x="265" y="66" width="1" height="1" fill="#a8acba"/>
<rect x="264.80" y="69.20" width="1" height="1" fill="#a8acba"/>
<rect x="482.20" y="50.50" width="1.6" height="20.50" fill="#dde2f2"/>
<rect x="474.80" y="50.50" width="8" height="2" fill="#f8f9fc"/>
<rect x="484.40" y="50.00" width="1" height="21.00" fill="#aeb2c0"/>
<rect x="485.20" y="68.00" width="6.5" height="3" fill="#dfe4f4"/>
<rect x="486" y="54" width="1" height="1" fill="#a8acba"/>
<rect x="486" y="57" width="1" height="1" fill="#a8acba"/>
<rect x="486" y="60" width="1" height="1" fill="#a8acba"/>
<rect x="486" y="63" width="1" height="1" fill="#a8acba"/>
<rect x="486" y="66" width="1" height="1" fill="#a8acba"/>
<rect x="486.00" y="69.20" width="1" height="1" fill="#a8acba"/>
<rect x="538.40" y="50.50" width="1.6" height="20.50" fill="#dde2f2"/>
<rect x="531.00" y="50.50" width="8" height="2" fill="#f8f9fc"/>
<rect x="540.80" y="50.00" width="1" height="21.00" fill="#aeb2c0"/>
<rect x="541.60" y="68.00" width="6.5" height="3" fill="#dfe4f4"/>
<rect x="543" y="54" width="1" height="1" fill="#a8acba"/>
<rect x="543" y="57" width="1" height="1" fill="#a8acba"/>
<rect x="543" y="60" width="1" height="1" fill="#a8acba"/>
<rect x="543" y="63" width="1" height="1" fill="#a8acba"/>
<rect x="543" y="66" width="1" height="1" fill="#a8acba"/>
<rect x="542.40" y="69.20" width="1" height="1" fill="#a8acba"/>
<rect x="798.40" y="50.50" width="1.6" height="20.50" fill="#dde2f2"/>
<rect x="791.00" y="50.50" width="8" height="2" fill="#f8f9fc"/>
<g transform="translate(9.40 53.10) scale(0.6250)"><path d="M8.5,2 H15.5 V8.5 H22 V15.5 H15.5 V22 H8.5 V15.5 H2 V8.5 H8.5 Z" fill="#2eae2e" stroke="#1a8a1a" stroke-width="1" /><path d="M9.5,3.5 H14 M3.5,9.8 H8.5" fill="none" stroke="#8fe08f" stroke-width="1.4" /></g>
<path d="M28.30,59.40 h4.6 l-2.3,2.6z" fill="#111"/>
<g transform="translate(37.80 53.10) scale(0.6250)"><path d="M5,4.5 L19,19.5" fill="none" stroke="#2a9a3a" stroke-width="1.7" /><path d="M1.3,4H7.7M4.5,0.8V7.2" fill="none" stroke="#6a68b8" stroke-width="1.9" /><path d="M16.3,20H22.7M19.5,16.8V23.2" fill="none" stroke="#6a68b8" stroke-width="1.9" /></g>
<path d="M56.50,59.40 h4.6 l-2.3,2.6z" fill="#111"/>
<g transform="translate(65.90 53.10) scale(0.6250)"><circle cx="11" cy="13.5" r="9" fill="none" stroke="#2a9a3a" stroke-width="1.3" /><path d="M7.8,13.5H14.2M11,10.3V16.7" fill="none" stroke="#f06018" stroke-width="2" /><path d="M15.8,4.5H22.2M19,1.3V7.7" fill="none" stroke="#f06018" stroke-width="2" /></g>
<path d="M84.60,59.40 h4.6 l-2.3,2.6z" fill="#111"/>
<g transform="translate(94.10 53.10) scale(0.6250)"><path d="M4,20 V4.5 H19.5 V20 Z" fill="none" stroke="#228a22" stroke-width="2.2" /><path d="M9.2,12.3H14.4M11.8,9.7V14.9" fill="none" stroke="#404070" stroke-width="1.8" /><path d="M17,3.6H23M20,0.6V6.6" fill="none" stroke="#404070" stroke-width="1.6" /><path d="M0.6,20.6H6.6M3.6,17.6V23.6" fill="none" stroke="#404070" stroke-width="1.6" /></g>
<path d="M112.70,59.40 h4.6 l-2.3,2.6z" fill="#111"/>
<g transform="translate(121.90 53.10) scale(0.6250)"><path d="M4,22 V14" fill="none" stroke="#6a68b8" stroke-width="2" /><path d="M4,13 C4,6 8,3.5 14,3.5" fill="none" stroke="#228a22" stroke-width="2" stroke-dasharray="1.8 1.8"/><path d="M14,3.5 H22" fill="none" stroke="#7a78c0" stroke-width="2.2" /></g>
<path d="M140.80,59.40 h4.6 l-2.3,2.6z" fill="#111"/>
<g transform="translate(150.00 53.10) scale(0.6250)"><path d="M4,21 V13 H19 V5" fill="none" stroke="#1f9a2a" stroke-width="2.4" /></g>
<path d="M169.00,59.40 h4.6 l-2.3,2.6z" fill="#111"/>
<g transform="translate(177.20 53.20) scale(0.6500)"><path d="M1,3.5 V20 C1,25 23,25 23,20 V3.5 Z" fill="url(#gCyl)" stroke="none" stroke-width="1" /><ellipse cx="12" cy="3.5" rx="11" ry="3.4" fill="#8fc68b"/></g>
<path d="M196.70,59.40 h4.6 l-2.3,2.6z" fill="#111"/>
<g transform="translate(215.00 53.10) scale(0.6250)"><path d="M12,9 L20,3 L23,9.5 L14,11.5Z" fill="#e0e4f0" stroke="#8890a8" stroke-width="0.8" /><path d="M17,12 H22" fill="none" stroke="#555" stroke-width="1.2" /><path d="M21,12 V22" fill="none" stroke="#b01888" stroke-width="2" /><ellipse cx="6.5" cy="9" rx="3.8" ry="2.6" fill="none" stroke="#1a58d8" stroke-width="2"/><ellipse cx="9" cy="17" rx="2.6" ry="3.8" fill="none" stroke="#1a58d8" stroke-width="2"/><path d="M9,10.5 L15,12.5 L10.5,14" fill="none" stroke="#1a58d8" stroke-width="2" /></g>
<g transform="translate(234.70 53.10) scale(0.6250)"><path d="M12,1.5 V9" fill="none" stroke="#5a8ae8" stroke-width="1.4" stroke-dasharray="2 1.4"/><path d="M12,13 V23" fill="none" stroke="#a858c0" stroke-width="1.8" /><path d="M6.5,5.5 L17.5,17 M17.5,5.5 L6.5,17" fill="none" stroke="#2a68e0" stroke-width="1.8" /></g>
<path d="M253.60,59.40 h4.6 l-2.3,2.6z" fill="#111"/>
<g transform="translate(271.50 53.10) scale(0.6250)"><rect x="2" y="13.5" width="8.6" height="8.6" fill="#f6f8ff" stroke="#2a7ad8" stroke-width="2" /><rect x="13.5" y="1.5" width="8.6" height="8.6" fill="#f6f8ff" stroke="#a01c98" stroke-width="2.1" /><path d="M12,19.5 H18 V15.5" fill="none" stroke="#2a7ad8" stroke-width="2.6" /><path d="M14.2,16 L18,11.6 L21.8,16Z" fill="#2a7ad8" stroke="none" stroke-width="1" /><path d="M2,1 L8,2.5 L6.5,5.5 L11,7 L9.5,10 L13,14 L5.5,10.5 L7,8 L2.5,6 L4,3.5Z" fill="#ffb020" stroke="#f06010" stroke-width="0.6" /></g>
<g transform="translate(290.30 53.10) scale(0.6250)"><rect x="2" y="13.5" width="8.6" height="8.6" fill="#f6f8ff" stroke="#2a7ad8" stroke-width="2" /><rect x="13.5" y="1.5" width="8.6" height="8.6" fill="#f6f8ff" stroke="#a01c98" stroke-width="2.1" /><path d="M12,19.5 H18 V15.5" fill="none" stroke="#2a7ad8" stroke-width="2.6" /><path d="M14.2,16 L18,11.6 L21.8,16Z" fill="#2a7ad8" stroke="none" stroke-width="1" /></g>
<g transform="translate(309.40 53.10) scale(0.6250)"><path d="M3,2.5 H10.5 V11 H3 M6.5,4.5V9" fill="none" stroke="#a01c98" stroke-width="2" /><path d="M10,15 V22 H20.5 V15 M12.5,20H18" fill="none" stroke="#2a7ad8" stroke-width="1.8" /><path d="M13,6 C17,7 19,10 19,13" fill="none" stroke="#2a7ad8" stroke-width="1.8" /><path d="M11,3.5 L15.5,4.5 L12.5,8.5Z" fill="#2a7ad8" stroke="none" stroke-width="1" /></g>
<g transform="translate(328.10 53.10) scale(0.6250)"><path d="M2,3.5 H8.5 V11 H2 M8.5,7H11.5" fill="none" stroke="#2a7ad8" stroke-width="1.9" /><path d="M21.5,3 H14.5 V13 H21.5" fill="none" stroke="#a01c98" stroke-width="2.1" /><path d="M11.5,2V12" fill="none" stroke="#2a7ad8" stroke-width="1.6" /><path d="M5,20.5 H17" fill="none" stroke="#2a7ad8" stroke-width="2" /><path d="M16,17.5 L20.5,20.5 L16,23.5Z" fill="#2a7ad8" stroke="none" stroke-width="1" /></g>
<g transform="translate(346.90 53.10) scale(0.6250)"><rect x="3" y="11" width="8" height="11" fill="#f6f8ff" stroke="#2a7ad8" stroke-width="1.8" /><rect x="14" y="3" width="8" height="19" fill="#f6f8ff" stroke="#a01c98" stroke-width="2.1" /><path d="M5,8 L10.5,2.5" fill="none" stroke="#2a7ad8" stroke-width="1.8" /><path d="M7,2 H11.5 V6.5Z" fill="#2a7ad8" stroke="none" stroke-width="1" /></g>
<g transform="translate(366.20 53.10) scale(0.6250)"><rect x="2" y="13" width="8.6" height="8.6" fill="#f6f8ff" stroke="#2a7ad8" stroke-width="2" /><path d="M12.5,19.5 H18 V16" fill="none" stroke="#2a7ad8" stroke-width="2.6" /><path d="M14.2,16.5 L18,12 L21.8,16.5Z" fill="#2a7ad8" stroke="none" stroke-width="1" /><path d="M14.9,5.5H22.1M18.5,1.9V9.1" fill="none" stroke="#f01020" stroke-width="2.6" /></g>
<g transform="translate(385.30 53.10) scale(0.6250)"><path d="M4,4 L22,2.5 L15,10Z" fill="#3a8af0" stroke="#1a60d0" stroke-width="0.6" /><path d="M15,10 L22,2.5 V18 L15,23Z" fill="#8a1a88" stroke="#5a0a60" stroke-width="0.6" /><path d="M6.5,7.5 C9,9 10,11 10.5,14" fill="none" stroke="#2a7ad8" stroke-width="2" /><path d="M8,14.5 L11,17.5 L13,13Z" fill="#2a7ad8" stroke="none" stroke-width="1" /></g>
<path d="M403.60,52.50 V69.00" stroke="#a0a0a0" stroke-width="1" fill="none"/>
<g transform="translate(409.10 53.10) scale(0.6250)"><path d="M4,8 H11 V2.5" fill="none" stroke="#2a7ad8" stroke-width="1.8" /><path d="M2.5,21.5 H20.5 V3" fill="none" stroke="#a01c98" stroke-width="2.4" /><path d="M10,10 L16.5,16.5" fill="none" stroke="#a01c98" stroke-width="1.8" /><path d="M17.8,12.5 V18 H12.3Z" fill="#a01c98" stroke="none" stroke-width="1" /></g>
<path d="M428.00,59.40 h4.6 l-2.3,2.6z" fill="#111"/>
<g transform="translate(436.50 53.10) scale(0.6250)"><rect x="3" y="2.5" width="7.5" height="8" fill="#fbeffa" stroke="#a01c98" stroke-width="2.2" /><rect x="13.5" y="2.5" width="7.5" height="8" fill="#fbeffa" stroke="#a01c98" stroke-width="2.2" /><rect x="3" y="14" width="7.5" height="8" fill="#eaf4ff" stroke="#2a7ad8" stroke-width="2.2" /><rect x="13.5" y="14" width="7.5" height="8" fill="#fbeffa" stroke="#a01c98" stroke-width="2.2" /></g>
<g transform="translate(456.00 53.10) scale(0.6250)"><rect x="2" y="5.5" width="20" height="10.5" fill="#f4f0fa" stroke="#c8b8e0" stroke-width="1.2" /><path d="M2,5.5 V16 H10" fill="none" stroke="#7aa8e8" stroke-width="1.4" /><path d="M5,10.7 H15" fill="none" stroke="#1a60d0" stroke-width="2" /><path d="M14,7 L19.5,10.7 L14,14.5Z" fill="#1a60d0" stroke="none" stroke-width="1" /></g>
<path d="M475.00,59.40 h4.6 l-2.3,2.6z" fill="#111"/>
<g transform="translate(493.50 53.10) scale(0.6250)"><path d="M8.5,0.6 C2,0.6 -0.2,7.5 3.8,12.2 C5.4,14 5.6,15.4 5.6,17.2 H11.4 C11.4,15.4 11.6,14 13.2,12.2 C17.2,7.5 15,0.6 8.5,0.6Z" fill="url(#gBulb)" stroke="#e4bc10" stroke-width="0.6" /><rect x="6" y="17.6" width="5" height="4.8" fill="#a4a4a4" stroke="#888" stroke-width="0.5" /><path d="M6,5 C6.5,3.5 7.5,3 9,2.8" fill="none" stroke="#fffef0" stroke-width="1.4" /><path d="M20.2,5 V19.5" fill="none" stroke="#5a66c0" stroke-width="3" /><path d="M16.4,7.8 L20.2,2.6 L24,7.8Z M16.4,16.8 L20.2,22 L24,16.8Z" fill="#5a66c0" stroke="none" stroke-width="1" /></g>
<path d="M512.50,59.40 h4.6 l-2.3,2.6z" fill="#111"/>
<g transform="translate(520.90 53.10) scale(0.6250)"><rect x="9.2" y="2.4" width="6" height="5.2" fill="#e8e8f8" stroke="#6a68b8" stroke-width="1.8" /><rect x="17" y="2.4" width="6" height="5.2" fill="#e8e8f8" stroke="#6a68b8" stroke-width="1.8" /><path d="M15,5H17" fill="none" stroke="#6a68b8" stroke-width="1.8" /><path d="M17,9.5 L6,20.5" fill="none" stroke="#6a68b8" stroke-width="3.2" stroke-dasharray="2.4 0.8"/><path d="M1.6,14.2 V23.4 H10.8Z" fill="#6a68b8" stroke="none" stroke-width="1" /></g>
<g transform="translate(549.10 53.10) scale(0.6250)"><rect x="4" y="3.5" width="16" height="17" fill="#d8ecfc" stroke="none" stroke-width="1" /><path d="M4,1.5V23 M20,1.5V23 M1.5,3.5H22.5 M1.5,20.5H22.5" fill="none" stroke="#f04a18" stroke-width="2.2" /><path d="M12,3.5V20.5 M4,12H20" fill="none" stroke="#5a60b8" stroke-width="1.6" /></g>
<g transform="translate(567.80 53.10) scale(0.6250)"><path d="M2.5,3.5H21.5 M2.5,8.8H21.5 M2.5,14.2H21.5 M2.5,19.5H21.5" fill="none" stroke="#f04a18" stroke-width="2.4" /><path d="M2.5,6.2H21.5 M2.5,11.5H21.5 M2.5,16.9H21.5" fill="none" stroke="#7a80d0" stroke-width="2" /><path d="M12,2.5V21" fill="none" stroke="#3a3aa0" stroke-width="1.4" /></g>
<g transform="translate(586.90 53.10) scale(0.6250)"><path d="M2,22 C6,16 9,8 11,2 V22Z" fill="#ffffff" stroke="none" stroke-width="1" /><path d="M11,2 C17,4 21,12 21,22 H11Z" fill="url(#gTube)" stroke="none" stroke-width="1" /><path d="M11,2 V22" fill="none" stroke="#404858" stroke-width="1.8" /><path d="M11,2 C17,4 21,12 21,22" fill="none" stroke="#e03818" stroke-width="1.6" /></g>
<g transform="translate(605.90 53.10) scale(0.6250)"><path d="M2.5,15 L13,3.5 C17,1.5 21.5,4 21.5,8.5 L11,20 C11,16.5 6.5,13.5 2.5,15Z" fill="#f2f8fe" stroke="#8aa0c0" stroke-width="0.8" /><path d="M7,10 L15.5,1.6 C18,1.5 20.5,3 21.2,5.4 L10,17.2 C9.4,14 8.5,12 7,10Z" fill="#bfe0fa" stroke="none" stroke-width="1" /><path d="M2.5,15 C6.5,13.5 11,16.5 11,20 L8.6,23 C8,19.5 5.5,17.5 2.5,18.5Z" fill="#f26a28" stroke="none" stroke-width="1" /><path d="M13,3.5 C17,1.5 21.5,4 21.5,8.5" fill="none" stroke="#f05a20" stroke-width="1.6" /><path d="M2.5,15 L13,3.5 M11,20 L21.5,8.5" fill="none" stroke="#f26a28" stroke-width="1.2" /></g>
<g transform="translate(625.30 53.10) scale(0.6250)"><path d="M1,6 L6,2.5 H18 L23,6 V18.5 L18,22 H6 L1,18.5Z" fill="url(#gTube)" stroke="#5a86b8" stroke-width="1" /><path d="M1,6 L6,9 H18 L23,6 M6,9V22 M18,9V22" fill="none" stroke="#5a86b8" stroke-width="1" /><path d="M1,6 L6,2.5 H18 L23,6 L18,9 H6Z" fill="#e4f2fc" stroke="#5a86b8" stroke-width="0.8" /><path d="M12,20.5 V11" fill="none" stroke="#fff" stroke-width="3" /><path d="M8,12 L12,6 L16,12Z" fill="#fff" stroke="#6a7a90" stroke-width="0.6" /><path d="M10.5,20.5 V12 M13.5,20.5V12" fill="none" stroke="#6a7a90" stroke-width="0.5" /></g>
<path d="M644.20,59.40 h4.6 l-2.3,2.6z" fill="#111"/>
<path d="M652.30,52.50 V69.00" stroke="#a0a0a0" stroke-width="1" fill="none"/>
<g transform="translate(658.10 53.10) scale(0.6250)"><path d="M2.5,8 C5,3.5 9,3 12,5.5 C15,8 18,6 19,3.5 L21,9 C18,13 15,13.5 12,11.5 C9,9.5 6,10 4.5,13Z" fill="#fbe8e0" stroke="#f04a18" stroke-width="1.2" /><circle cx="11.5" cy="9.5" r="1.6" fill="#f04a18" stroke="none" stroke-width="1" /><path d="M7,18 C10,14 13,17 16,15 L18,12.5 L22,14 L17.5,20.5 C14,22.5 12,20 9,22.5Z" fill="#d6e6f6" stroke="#6a88b8" stroke-width="1" /><path d="M17,10 L22.5,13 L18.5,16Z" fill="#5a78b0" stroke="none" stroke-width="1" /></g>
<g transform="translate(676.50 53.10) scale(0.6250)"><path d="M3,3 C7,0.5 11,2 12,6 L22,13.5 L15.5,15 L18,22.5 L10.5,17.5 C5,18 1,13 2.5,8Z" fill="#6e7482" stroke="#4a5060" stroke-width="0.8" /><path d="M2.5,16.5 C2,8 9,2 17,4.5 C21,6 23,9 22,12.5 C19,10 14,9 11,11.5 C9,13.5 8.5,16 9,19.5 C6.5,20.5 3.5,19 2.5,16.5Z" fill="#b4e0fb" stroke="#f04a18" stroke-width="1.3" /><path d="M6,8 L11,11.5 M12,3.8 L13.5,10 M18.5,5.2 L17.5,10.2 M2.6,13.5 L9,15" fill="none" stroke="#f04a18" stroke-width="1" /></g>
<g transform="translate(694.90 53.10) scale(0.6250)"><path d="M2,7.5 L7,2.5 H22 L17,7.5Z" fill="#e4e4e4" stroke="#4a4a4a" stroke-width="1.1" /><path d="M17,7.5 L22,2.5 V17 L17,22.5Z" fill="#767676" stroke="#4a4a4a" stroke-width="1.1" /><rect x="2" y="7.5" width="15" height="15" fill="#fbfbfb" stroke="#4a4a4a" stroke-width="1.2" /><path d="M9.5,7.5V22.5 M2,15H17 M9.5,7.5 L14.5,2.5 M17,15 L22,10" fill="none" stroke="#4a4a4a" stroke-width="1.1" /></g>
<path d="M714.80,52.50 V69.00" stroke="#a0a0a0" stroke-width="1" fill="none"/>
<g transform="translate(719.50 53.10) scale(0.6250)"><path d="M1,16.5 L9.5,11 L23,15 L14,22.5Z" fill="#f4f6f8" stroke="#8a96a8" stroke-width="1" /><path d="M7.5,4.5 V15 C7.5,18.2 17.5,18.2 17.5,15 V4.5" fill="#c4e4fa" stroke="#f04a18" stroke-width="1.2" /><ellipse cx="12.5" cy="4.5" rx="5" ry="2.2" fill="#fde8e0" stroke="#f04a18" stroke-width="1.2"/><ellipse cx="12.5" cy="8.5" rx="5" ry="2.2" fill="none" stroke="#f04a18" stroke-width="1"/><ellipse cx="12.5" cy="12.5" rx="5" ry="2.2" fill="none" stroke="#f04a18" stroke-width="1"/></g>
<path d="M738.90,59.40 h4.6 l-2.3,2.6z" fill="#111"/>
<g transform="translate(748.20 53.10) scale(0.6250)"><rect x="2" y="2" width="20.5" height="20.5" fill="#8e8e8e" stroke="#6a6a6a" stroke-width="1" /><path d="M2,9H22.5 M2,15.5H22.5 M9,2V22.5 M15.5,2V22.5" fill="none" stroke="#7a7a7a" stroke-width="0.9" /><path d="M0.5,6.5 L6.5,0.5 L23.5,17 L17.5,23Z" fill="#a8dcfb" stroke="#f04a18" stroke-width="1.5" /><path d="M3.5,3.5 L20.5,20" fill="none" stroke="#f04a18" stroke-width="1" /><path d="M11,5 L5,11 M17,10.8 L11,17" fill="none" stroke="#f04a18" stroke-width="0.9" /></g>
<path d="M766.70,59.40 h4.6 l-2.3,2.6z" fill="#111"/>
<g transform="translate(776.00 53.10) scale(0.6250)"><rect x="9" y="1.5" width="6" height="7" fill="#808088" stroke="#585860" stroke-width="0.8" /><path d="M8.5,9 H15.5 L18,16 H6Z" fill="#f0a088" stroke="#f04a18" stroke-width="1" /><rect x="6.5" y="16.5" width="11" height="6.5" fill="#808088" stroke="#585860" stroke-width="0.8" /><path d="M7,12.5H17 M12,9V16 M6.5,19.5H17.5 M9.5,16.5V23 M14.5,16.5V23" fill="none" stroke="#f04a18" stroke-width="0.9" /><path d="M9,4.5H15" fill="none" stroke="#c0c0c8" stroke-width="0.8" /></g>
<path d="M795.00,59.40 h4.6 l-2.3,2.6z" fill="#111"/>
<rect x="3.30" y="75.60" width="12.50" height="12.70" rx="1.6" fill="url(#gBtn2)" stroke="#a8a8a8" stroke-width="0.8"/>
<rect x="19.20" y="76.50" width="43.40" height="11.80" fill="#fff" stroke="#a9b2c4" stroke-width="0.8"/>
<rect x="20.80" y="78.00" width="29.70" height="8.80" fill="#e6e6e6"/>
<path d="M55.40,81.6 h3.8 l-1.9,2.2z" fill="#a2a2a2"/>
<rect x="71.00" y="75.60" width="12.70" height="12.70" rx="1.6" fill="url(#gBtn2)" stroke="#a8a8a8" stroke-width="0.8"/>
<rect x="86.70" y="76.50" width="43.30" height="11.80" fill="#fff" stroke="#a9b2c4" stroke-width="0.8"/>
<rect x="88.30" y="78.00" width="27.20" height="8.80" fill="#e6e6e6"/>
<path d="M122.80,81.6 h3.8 l-1.9,2.2z" fill="#a2a2a2"/>
<rect x="138.40" y="75.60" width="12.00" height="12.70" rx="1.6" fill="url(#gBtn2)" stroke="#a8a8a8" stroke-width="0.8"/>
<rect x="154.40" y="76.50" width="43.20" height="11.80" fill="#fff" stroke="#a9b2c4" stroke-width="0.8"/>
<rect x="156.00" y="78.00" width="29.60" height="8.80" fill="#e6e6e6"/>
<path d="M190.40,81.6 h3.8 l-1.9,2.2z" fill="#a2a2a2"/>
<rect x="202.30" y="75.40" width="13.50" height="12.90" fill="#eeeeee"/>
<rect x="202.30" y="87.90" width="13.50" height="0.8" fill="#dcdcd0"/>
<rect x="217.00" y="75.40" width="13.30" height="12.90" fill="#eeeeee"/>
<rect x="217.00" y="87.90" width="13.30" height="0.8" fill="#dcdcd0"/>
<rect x="231.60" y="75.40" width="13.40" height="12.90" fill="#eeeeee"/>
<rect x="231.60" y="87.90" width="13.40" height="0.8" fill="#dcdcd0"/>
<g transform="translate(201.50 74.50) scale(0.6250)"><path d="M1.5,12H11 M6.2,7.2V16.8" fill="none" stroke="#9a9a9a" stroke-width="4" /><path d="M16,2.5 L23.5,2.5 L19,9.5 H22.5 L10.5,21.5 L13.8,13.5 H10.5 Z" fill="#9a9a9a" stroke="#9a9a9a" stroke-width="0.8" /></g>
<g transform="translate(216.20 74.50) scale(0.6250)"><path d="M8.6,2 H15.4 L14,15 H10Z" fill="#9a9a9a" stroke="none" stroke-width="1" /><rect x="9.6" y="17" width="4.8" height="4" fill="#9a9a9a" stroke="none" stroke-width="1" /><path d="M5,22.5H19" fill="none" stroke="#c0c0c0" stroke-width="1.5" /></g>
<g transform="translate(230.80 74.50) scale(0.6250)"><path d="M2.5,4 L7,6.5 H17 L21.5,4 V21.5 H2.5Z" fill="#9a9a9a" stroke="none" stroke-width="1" /><rect x="8.5" y="9" width="1.6" height="1.6" fill="#c4c4c4" stroke="none" stroke-width="1" /><rect x="14" y="9" width="1.6" height="1.6" fill="#c4c4c4" stroke="none" stroke-width="1" /></g>
<rect x="246.4" y="75.8" width="6.6" height="12.4" rx="1" fill="#f0f0f0" stroke="#c0c0c0" stroke-width="0.7"/>
<path d="M248.3,82.2 h2.8 l-1.4,1.7z" fill="#777"/>
<rect x="255.70" y="75.60" width="13.10" height="12.70" rx="1.6" fill="url(#gBtn)" stroke="#909090" stroke-width="0.8"/>
<g transform="translate(254.80 74.50) scale(0.6250)"><text x="12" y="20" text-anchor="middle" font-size="22" font-weight="bold" font-family="Liberation Sans,sans-serif" fill="#dfe6fa" stroke="#4a5070" stroke-width="1.1">?</text></g>
<path d="M273.90,75.00 V88.60" stroke="#fafaf0" stroke-width="1" fill="none"/>
<path d="M277.20,75.00 V88.60" stroke="#b0b0a0" stroke-width="1" fill="none"/>
<rect x="282.40" y="75.60" width="27.20" height="12.70" rx="1.6" fill="url(#gBtn)" stroke="#7c7c7c" stroke-width="0.8"/>
<rect x="316.40" y="75.60" width="27.20" height="12.70" rx="1.6" fill="url(#gBtn)" stroke="#7c7c7c" stroke-width="0.8"/>
<rect x="349.00" y="75.60" width="13.00" height="12.70" rx="1.6" fill="url(#gBtn)" stroke="#909090" stroke-width="0.8"/>
<g transform="translate(348.00 74.50) scale(0.6250)"><path d="M11,2 L21.5,0.5 L23.5,13 L17,11Z" fill="#1c1c1c" stroke="none" stroke-width="1" /><path d="M12,6 L22,5 M13,9 L22.5,9.5" fill="none" stroke="#777" stroke-width="0.8" /><g transform="translate(2.5 3.5) scale(.86)"><path d="M7,2 L7,19 L11,15.5 L14,22 L16.8,20.8 L14,14.5 L19,14.5 Z" fill="#fff" stroke="#222" stroke-width="1.5" /></g><path d="M1,2 L7,3 L4.5,6 L8,8.5 L1.5,9.5 L3.5,6.5Z" fill="#ffc428" stroke="#e08800" stroke-width="0.5" /></g>
<rect x="367.00" y="75.60" width="43.60" height="12.70" rx="1.6" fill="url(#gBtn)" stroke="#7c7c7c" stroke-width="0.8"/>
<path d="M403.30,81.40 h4.6 l-2.3,2.6z" fill="#111"/>
<rect x="415.8" y="75.4" width="22.5" height="13" fill="#f4f4ee"/>
<rect x="418.4" y="77.2" width="9" height="8.6" fill="none" stroke="#555" stroke-width="0.9" stroke-dasharray="1.8 1.2"/>
<path d="M432.8,81.8 h3.2 l-1.6,2z" fill="#222"/>
<rect x="440.50" y="75.40" width="13.00" height="12.90" fill="#eeeeee"/>
<rect x="440.50" y="87.90" width="13.00" height="0.8" fill="#dcdcd0"/>
<rect x="455.30" y="75.40" width="13.00" height="12.90" fill="#eeeeee"/>
<rect x="455.30" y="87.90" width="13.00" height="0.8" fill="#dcdcd0"/>
<rect x="473.10" y="75.40" width="13.00" height="12.90" fill="#eeeeee"/>
<rect x="473.10" y="87.90" width="13.00" height="0.8" fill="#dcdcd0"/>
<rect x="487.90" y="75.40" width="13.00" height="12.90" fill="#eeeeee"/>
<rect x="487.90" y="87.90" width="13.00" height="0.8" fill="#dcdcd0"/>
<rect x="502.50" y="75.40" width="13.00" height="12.90" fill="#eeeeee"/>
<rect x="502.50" y="87.90" width="13.00" height="0.8" fill="#dcdcd0"/>
<rect x="520.50" y="75.40" width="13.00" height="12.90" fill="#eeeeee"/>
<rect x="520.50" y="87.90" width="13.00" height="0.8" fill="#dcdcd0"/>
<rect x="535.70" y="75.40" width="13.00" height="12.90" fill="#eeeeee"/>
<rect x="535.70" y="87.90" width="13.00" height="0.8" fill="#dcdcd0"/>
<rect x="571.90" y="75.40" width="13.00" height="12.90" fill="#eeeeee"/>
<rect x="571.90" y="87.90" width="13.00" height="0.8" fill="#dcdcd0"/>
<rect x="586.80" y="75.40" width="13.00" height="12.90" fill="#eeeeee"/>
<rect x="586.80" y="87.90" width="13.00" height="0.8" fill="#dcdcd0"/>
<g transform="translate(439.50 74.50) scale(0.6250)"><g transform="rotate(-12 12 12)"><path d="M7,2 L7,19 L11,15.5 L14,22 L16.8,20.8 L14,14.5 L19,14.5 Z" fill="#fbfbfb" stroke="#8c8c8c" stroke-width="1.5" /></g></g>
<g transform="translate(455.10 75.30) scale(0.5583)"><path d="M7,3 H17 L21,7 V17 L17,21 H7 L3,17 V7Z" fill="#9a9a9a" stroke="none" stroke-width="1" /></g>
<g transform="translate(472.90 75.30) scale(0.5583)"><path d="M7,3 H17 L21,7 V17 L17,21 H7 L3,17 V7Z" fill="#9a9a9a" stroke="none" stroke-width="1" /></g>
<g transform="translate(487.70 75.30) scale(0.5583)"><path d="M7,3 H17 L21,7 V17 L17,21 H7 L3,17 V7Z" fill="#9a9a9a" stroke="none" stroke-width="1" /></g>
<g transform="translate(502.30 75.30) scale(0.5583)"><path d="M7,3 H17 L21,7 V17 L17,21 H7 L3,17 V7Z" fill="#9a9a9a" stroke="none" stroke-width="1" /></g>
<g transform="translate(520.70 75.70) scale(0.5250)"><path d="M12,2.5 L20.5,7 V17 L12,21.5 L3.5,17 V7Z" fill="#f0f0f0" stroke="#a8a8a8" stroke-width="1.2" /><path d="M12,2.5 L3.5,7 V17 L12,21.5 V11.5 L8,9.5Z" fill="#a4a4a4" stroke="none" stroke-width="1" /><path d="M12,11.5 L20.5,7 M12,11.5V21.5 M12,2.5V11.5" fill="none" stroke="#b0b0b0" stroke-width="1" /></g>
<g transform="translate(535.95 76.15) scale(0.5208)"><path d="M4,17 L12,8.5 L20,17" fill="none" stroke="#9a9a9a" stroke-width="4" /></g>
<rect x="554.00" y="75.60" width="13.20" height="12.70" rx="1.6" fill="#dfe8f6" stroke="#5a7ab8" stroke-width="0.8"/>
<g transform="translate(553.10 74.50) scale(0.6250)"><g transform="translate(-1 -1) scale(.8)"><path d="M7,2 L7,19 L11,15.5 L14,22 L16.8,20.8 L14,14.5 L19,14.5 Z" fill="#fff" stroke="#222" stroke-width="1.5" /></g><path d="M9,15 L13.5,20.5 L22,9" fill="none" stroke="#2a6ae8" stroke-width="3" /></g>
<g transform="translate(570.90 74.50) scale(0.6250)"><circle cx="12" cy="12" r="7.2" fill="#f4f4f4" stroke="#8c8c8c" stroke-width="1.7" /><path d="M7.2,17 L16.8,7" fill="none" stroke="#8c8c8c" stroke-width="1.7" /></g>
<g transform="translate(585.80 74.50) scale(0.6250)"><circle cx="12" cy="12" r="10.4" fill="#9a9a9a" stroke="none" stroke-width="1" /></g>
<rect x="605.30" y="75.60" width="13.10" height="12.70" rx="1.6" fill="url(#gBtn)" stroke="#909090" stroke-width="0.8"/>
<g transform="translate(604.30 74.50) scale(0.6250)"><text x="12" y="20" text-anchor="middle" font-size="22" font-weight="bold" font-family="Liberation Sans,sans-serif" fill="#dfe6fa" stroke="#4a5070" stroke-width="1.1">?</text></g>
<rect x="27.8" y="111" width="3.2" height="317" fill="#e2e6f3"/>
<rect x="27.6" y="111" width="3.6" height="8" fill="#f6f8fc"/>
<g transform="translate(3.30 119.70) scale(0.6250)"><path d="M1,4.5 V19.5 C1,24.5 23,24.5 23,19.5 V4.5Z" fill="url(#gBlueH)" stroke="none" stroke-width="1" /><ellipse cx="12" cy="4.5" rx="11" ry="3.8" fill="#3a9cf8"/><path d="M12,6 L16.5,12 H13.8 V19.5 H10.2 V12 H7.5Z" fill="#fff" stroke="#1a1a1a" stroke-width="1" /></g>
<g transform="translate(3.30 138.50) scale(0.6250)"><path d="M1,4.5 V19.5 C1,24.5 23,24.5 23,19.5 V4.5Z" fill="url(#gBlueH)" stroke="none" stroke-width="1" /><ellipse cx="12" cy="4.5" rx="11" ry="3.8" fill="#3a9cf8"/><path d="M4,13 C7,18 13,18 17,14" fill="none" stroke="#fff" stroke-width="2.2" /><path d="M4,13 C7,18 13,18 17,14" fill="none" stroke="#223" stroke-width="0.6" /><path d="M13.5,10.5 H19.5 V16.5Z" fill="#fff" stroke="#223" stroke-width="0.7" /></g>
<g transform="translate(3.30 157.00) scale(0.6250)"><path d="M2,21 C2,10 9,3 22,2.5 V9 C13,9.5 9,14 9,21Z" fill="url(#gBlueV)" stroke="none" stroke-width="1" /><path d="M2,21 H9 V18 H2.3Z" fill="#0a48b8" stroke="none" stroke-width="1" /></g>
<g transform="translate(3.30 175.70) scale(0.6250)"><path d="M5,2 H19 L16.5,12.5 H22.5 L12,23.5 L1.5,12.5 H7.5Z" fill="url(#gBlueV)" stroke="none" stroke-width="1" /><path d="M5,2.6H19" fill="none" stroke="#8accff" stroke-width="1.6" /></g>
<g transform="translate(3.30 194.00) scale(0.6250)"><path d="M2,7 L5,2.5 H17 C21,4 22.5,8 22.5,11 V19 L19,23 H2Z" fill="url(#gBlueD)" stroke="none" stroke-width="1" /><path d="M2,7 H19 V23 M19,7 L22,3.5" fill="none" stroke="#5ab0ff" stroke-width="1" /><path d="M11,2.5 H17 C21,4 22.5,8 22.5,14.5 C17,14 11.5,9.5 11,2.5Z" fill="#e81808" stroke="none" stroke-width="1" /></g>
<path d="M23.00,199.80 h4.6 l-2.3,2.6z" fill="#111"/>
<path d="M3,212.3H28" stroke="#c8c8c8" stroke-width="1"/>
<g transform="translate(3.30 216.10) scale(0.6250)"><rect x="2" y="2" width="20" height="20" fill="#e8f2ff" stroke="#2a74e0" stroke-width="1.4" /><path d="M2,2 L6,6 M22,2 L18,6" fill="none" stroke="#2a74e0" stroke-width="1" /><rect x="6" y="6" width="13" height="13" fill="#0a3cb0" stroke="#2a74e0" stroke-width="1.2" /><rect x="8" y="8" width="7" height="7" fill="#0a1a78" stroke="none" stroke-width="1" /></g>
<g transform="translate(3.30 234.70) scale(0.6250)"><rect x="9.5" y="2.5" width="12" height="19" fill="url(#gBlueV)" stroke="#1a60d0" stroke-width="0.8" /><circle cx="8.5" cy="15.5" r="7" fill="url(#gSphere)" stroke="none" stroke-width="1" /><path d="M8.5,8.5V22.5" fill="none" stroke="#0a2a80" stroke-width="1" /></g>
<path d="M23.00,241.00 h4.6 l-2.3,2.6z" fill="#111"/>
<g transform="translate(3.30 252.70) scale(0.6250)"><path d="M2,6 L7,2.5 H13 L22.5,19 L17,22.5 H2Z" fill="url(#gBlueV)" stroke="none" stroke-width="1" /><path d="M13,2.5 L22.5,19 L17,22.5 L8.5,6Z" fill="#e82808" stroke="none" stroke-width="1" /><path d="M2,6 H8.5" fill="none" stroke="#7cc4ff" stroke-width="1" /></g>
<g transform="translate(3.30 271.10) scale(0.6250)"><path d="M2,15 L9,9 H22 L15,15Z" fill="#58a8f8" stroke="#1a60d0" stroke-width="0.6" /><path d="M2,15 H15 L22,9 V11.5 L15,17.5 H2Z" fill="#e82808" stroke="none" stroke-width="1" /></g>
<g transform="translate(3.30 289.50) scale(0.6250)"><path d="M2.5,7 L6.5,2.5 H21.5 V17.5 L17.5,22 H2.5Z" fill="#1a64d8" stroke="#0a48b0" stroke-width="1" /><rect x="2.5" y="7" width="15" height="15" fill="#0a2a90" stroke="#2a74e0" stroke-width="1.2" /><path d="M17.5,7 L21.5,2.5" fill="none" stroke="#5ab0ff" stroke-width="1" /></g>
<path d="M22.4,290.5V303" stroke="#c0c0c0" stroke-width="1"/>
<path d="M3,308.5H28" stroke="#c8c8c8" stroke-width="1"/>
<g transform="translate(3.30 313.50) scale(0.6250)"><path d="M2,11 L6,7 H22 V18 L18,22.5 H2Z" fill="url(#gBlueV)" stroke="#1a60d0" stroke-width="0.8" /><path d="M2,11 H18 V22.5 M18,11 L22,7" fill="none" stroke="#8ad0ff" stroke-width="1.1" /><path d="M10,9 L18,2.5" fill="none" stroke="#f07018" stroke-width="3" /><path d="M14,1 H21 V8Z" fill="#f07018" stroke="none" stroke-width="1" /></g>
<g transform="translate(3.30 331.50) scale(0.6250)"><path d="M2.5,6.5 L6,2.5 H21.5 V18 L18,22 H2.5Z" fill="#2a6cc8" stroke="#103878" stroke-width="1.2" /><path d="M2.5,6.5 H18 V22 M18,6.5 L21.5,2.5 M10.2,6.5V22 M2.5,14.2H18" fill="none" stroke="#0a2860" stroke-width="1.4" /></g>
<g transform="translate(3.30 349.70) scale(0.6250)"><path d="M1.5,15 L10,10.5 L22.5,14 L13.5,21.5Z" fill="#fafafa" stroke="#9a9a9a" stroke-width="1" /><path d="M7.5,2.5 H16.5 V12 H20 L12,19.5 L4,12 H7.5Z" fill="url(#gBlueV)" stroke="none" stroke-width="1" /></g>
<g transform="translate(3.30 368.10) scale(0.6250)"><rect x="1.5" y="1.5" width="21" height="21" fill="#daeaff" stroke="#1a60d0" stroke-width="1.8" /><rect x="5" y="10.5" width="6" height="8.5" fill="#f4f8ff" stroke="#1a60d0" stroke-width="1.4" /><rect x="14" y="5" width="5" height="14" fill="#f4f8ff" stroke="#1a60d0" stroke-width="1.4" /><path d="M5.5,7 L8,4 L10.5,7" fill="none" stroke="#1a60d0" stroke-width="1.4" /></g>
<path d="M22.6,369.5V382" stroke="#c0c0c0" stroke-width="1"/>
<path d="M3,386.8H28" stroke="#c8c8c8" stroke-width="1"/>
<g transform="translate(3.30 391.10) scale(0.6250)"><rect x="1.5" y="1.5" width="21" height="21" fill="#e8f2ff" stroke="#1a60d0" stroke-width="1.8" /><rect x="5" y="5" width="5.5" height="5.5" fill="#e01010" stroke="none" stroke-width="1" /><rect x="13.5" y="5" width="5.5" height="5.5" fill="#fff" stroke="#6a9ae0" stroke-width="1" /><rect x="5" y="13.5" width="5.5" height="5.5" fill="#fff" stroke="#6a9ae0" stroke-width="1" /><rect x="13.5" y="13.5" width="5.5" height="5.5" fill="#fff" stroke="#6a9ae0" stroke-width="1" /></g>
<path d="M22.90,397.40 h4.6 l-2.3,2.6z" fill="#111"/>
<g transform="translate(3.30 409.80) scale(0.6250)"><path d="M2,12 L8,8 V2.5 L14,1 L22,4 V18 L16,23 H2Z" fill="#1a64d8" stroke="#0a48b0" stroke-width="0.6" /><path d="M8,8 L14,10 V6 L22,8.5 V4 L14,1 L8,2.5Z" fill="#f01818" stroke="none" stroke-width="1" /><path d="M2,12 L8,8 L14,10 L9,14Z" fill="#e81010" stroke="none" stroke-width="1" /><path d="M14,6V10 L9,14 V23" fill="none" stroke="#0a48b0" stroke-width="0.8" /></g>
<path d="M22.90,416.10 h4.6 l-2.3,2.6z" fill="#111"/>
<rect x="191.7" y="112" width="9" height="8.6" fill="#f0f0f0" stroke="#d8d8d8" stroke-width="0.6"/><path d="M192,120.6 H200.7 V112.2" stroke="#8a8a8a" stroke-width="0.6" fill="none"/>
<path d="M194.00,115.20 h4.6 l-2.3,2.6z" fill="#111"/>
<rect x="204.3" y="112" width="9.7" height="8.6" fill="#f0f0f0" stroke="#d8d8d8" stroke-width="0.6"/><path d="M204.6,120.6 H214 V112.2" stroke="#8a8a8a" stroke-width="0.6" fill="none"/>
<path d="M207,114 L211.4,118.7 M211.4,114 L207,118.7" stroke="#444" stroke-width="0.8" fill="none"/>
<rect x="32.2" y="122.6" width="38.2" height="12" fill="#ffffff"/>
<rect x="70.8" y="123.2" width="26.6" height="11" fill="#ececec" stroke="#8e8e8e" stroke-width="0.8"/>
<path d="M71.6,133.6 V124 H96.6" stroke="#fff" stroke-width="0.7" fill="none"/>
<path d="M32.2,134.5 H215.6" stroke="#9aa6bf" stroke-width="0.9" fill="none"/>
<rect x="31" y="122" width="1.1" height="485" fill="#c4c8dc"/>
<rect x="32.1" y="134.9" width="2.4" height="472" fill="#fafafa"/>
<rect x="214.2" y="134.9" width="2.6" height="472" fill="#f8f8f8"/>
<path d="M35,136.8 H214.6" stroke="#b4b8c4" stroke-width="0.8" fill="none"/>
<path d="M35,155.5 H214.6" stroke="#b8b8b8" stroke-width="0.9" fill="none"/>
<path d="M35,156.4 H214.6" stroke="#fafafa" stroke-width="0.8" fill="none"/>
<g transform="translate(38.70 141.30) scale(0.6375)"><path d="M0,9.5 L3.5,6.5 L6,10.5 L10.5,0.5 L13.5,1.8 L7.5,15.5 H4.5Z" fill="#9c9c9c" stroke="none" stroke-width="1" /><path d="M10,8 L16,11.8 L10,15.6Z" fill="#9c9c9c" stroke="none" stroke-width="1" /></g>
<g transform="translate(53.00 141.30) scale(0.6375)"><path d="M0,9.5 L3.5,6.5 L6,10.5 L10.5,0.5 L13.5,1.8 L7.5,15.5 H4.5Z" fill="#9c9c9c" stroke="none" stroke-width="1" /><path d="M9.8,9 L16,15.6 M16,9 L9.8,15.6" fill="none" stroke="#9c9c9c" stroke-width="1.9" /></g>
<path d="M66.50,140.50 V152.30" stroke="#a6a6a6" stroke-width="1" fill="none"/>
<g transform="translate(71.20 141.60) scale(0.6000)"><path d="M0,1 H11.5 V5.2 H8.2 V15.5 H3.6 V5.2 H0Z" fill="#9c9c9c" stroke="none" stroke-width="1" /><path d="M10,8 L16,11.8 L10,15.6Z" fill="#9c9c9c" stroke="none" stroke-width="1" /></g>
<g transform="translate(85.00 141.30) scale(0.6375)"><path d="M0,1 H11.5 V5.2 H8.2 V15.5 H3.6 V5.2 H0Z" fill="#9c9c9c" stroke="none" stroke-width="1" /><path d="M9.8,9 L16,15.6 M16,9 L9.8,15.6" fill="none" stroke="#9c9c9c" stroke-width="1.9" /></g>
<path d="M98.50,140.50 V152.30" stroke="#a6a6a6" stroke-width="1" fill="none"/>
<g transform="translate(102.40 141.60) scale(0.6000)"><rect x="1" y="1.5" width="14" height="13.5" fill="#9c9c9c" stroke="none" stroke-width="1" /></g>
<g transform="translate(116.20 141.50) scale(0.6125)"><path d="M5,1.5 H11.5 L15.5,5.5 V11 L11,15 H4 L0.5,11.5 V6Z" fill="#9c9c9c" stroke="none" stroke-width="1" /></g>
<g transform="translate(144.80 141.30) scale(0.6375)"><path d="M0,1 H11.5 V5.2 H8.2 V15.5 H3.6 V5.2 H0Z" fill="#9c9c9c" stroke="none" stroke-width="1" /><path d="M9,10.5H12" fill="none" stroke="#9c9c9c" stroke-width="2.4" /><path d="M11.5,7 L16,10.5 L11.5,14Z" fill="#9c9c9c" stroke="none" stroke-width="1" /></g>
<path d="M158.30,140.50 V152.30" stroke="#a6a6a6" stroke-width="1" fill="none"/>
<g transform="translate(162.80 141.80) scale(0.5750)"><path d="M9,1 L15,6.5 L7,15.5 L1,10Z" fill="#9c9c9c" stroke="none" stroke-width="1" /><path d="M2,4 L6,1.5 M1,7 L4.5,5" fill="none" stroke="#9c9c9c" stroke-width="1.2" /><path d="M9.5,4 L12.5,7" fill="none" stroke="#e8e8e8" stroke-width="1.2" /></g>
<path d="M175.80,140.50 V152.30" stroke="#a6a6a6" stroke-width="1" fill="none"/>
<path d="M189.50,140.50 V152.30" stroke="#b8b8b8" stroke-width="1" fill="none"/>
<g transform="translate(39.60 160.60) scale(0.5500)"><path d="M1,7 C1,-1.5 15,-1.5 15,7 V16 H1Z M5,7 H11 C11,3 5,3 5,7Z" fill="#9c9c9c" stroke="none" stroke-width="1" fill-rule="evenodd"/></g>
<g transform="translate(53.60 160.20) scale(0.6000)"><path d="M1,4 C4,1.5 6,6 9,4 C11,2.5 13,3 15,4 M1,8 C4,5.5 6,10 9,8 C11,6.5 13,7 15,8 M1,12 C4,9.5 6,14 9,12 C11,10.5 13,11 15,12" fill="none" stroke="#9c9c9c" stroke-width="1.3" /></g>
<g transform="translate(67.40 160.50) scale(0.5625)"><path d="M1,7 C1,-1 15,-1 15,7 V16 H1Z" fill="#9c9c9c" stroke="none" stroke-width="1" /><path d="M5,5 C6,3 10,3 11,5" fill="none" stroke="#d8d8d8" stroke-width="1.2" stroke-dasharray="1.5 1"/></g>
<path d="M80.70,159.50 V171.00" stroke="#a6a6a6" stroke-width="1" fill="none"/>
<g transform="translate(84.40 159.70) scale(0.6625)"><path d="M0.5,4.5 H15.5 L8,12.5Z" fill="#9c9c9c" stroke="none" stroke-width="1" /></g>
<g transform="translate(98.60 159.80) scale(0.6500)"><path d="M0.5,12 H15.5 L8,4Z" fill="#9c9c9c" stroke="none" stroke-width="1" /></g>
<g transform="translate(112.80 160.10) scale(0.6125)"><path d="M1.5,3 H14.5 V6 M1.5,3 V9.5 H11" fill="none" stroke="#9c9c9c" stroke-width="1.8" /><path d="M10,6 L15.5,9.5 L10,13Z" fill="#9c9c9c" stroke="none" stroke-width="1" /></g>
<g transform="translate(127.20 160.40) scale(0.5750)"><path d="M1,7 H15 L8,0.5Z M1,9.5 H15 L8,16Z" fill="#9c9c9c" stroke="none" stroke-width="1" /></g>
<path d="M140.50,159.50 V171.00" stroke="#a6a6a6" stroke-width="1" fill="none"/>
<g transform="translate(144.80 160.20) scale(0.6000)"><path d="M1,4 C4,1.5 6,6 9,4 C11,2.5 13,3 15,4 M1,8 C4,5.5 6,10 9,8 C11,6.5 13,7 15,8 M1,12 C4,9.5 6,14 9,12 C11,10.5 13,11 15,12" fill="none" stroke="#9c9c9c" stroke-width="1.2" /><path d="M9,9 L15,14 M12,15 L15,14 L14.5,11" fill="none" stroke="#9c9c9c" stroke-width="1.1" /></g>
<g transform="translate(158.50 159.65) scale(0.6687)"><circle cx="6" cy="6" r="5" fill="none" stroke="#9c9c9c" stroke-width="1.2" /><rect x="7" y="7.5" width="8" height="7.5" fill="none" stroke="#9c9c9c" stroke-width="1.2" rx="1"/></g>
<path d="M56.8,193.8 H61.5" stroke="#8a8a8a" stroke-width="0.7" fill="none"/>
<path d="M54.5,196.2 V203.5 H62" stroke="#6e6e6e" stroke-width="0.8" fill="none"/>
<rect x="40.2" y="181.6" width="4.8" height="4.8" fill="#fcfcfc" stroke="#9aa0aa" stroke-width="0.7"/><path d="M41.3,184H43.9" stroke="#334" stroke-width="0.7"/>
<rect x="52.2" y="191.5" width="4.6" height="4.6" fill="#fcfcfc" stroke="#9aa0aa" stroke-width="0.7"/><path d="M53.2,193.8H55.8M54.5,192.5V195.1" stroke="#334" stroke-width="0.7"/>
<path d="M45,184 H48.5" stroke="#9a9a9a" stroke-width="0.7"/>
<rect x="49.30" y="179.40" width="4" height="3.4" fill="#22d8f0" stroke="#10209a" stroke-width="0.9"/>
<rect x="54.50" y="179.40" width="4" height="3.4" fill="#22d8f0" stroke="#10209a" stroke-width="0.9"/>
<rect x="49.30" y="183.90" width="4" height="3.4" fill="#22d8f0" stroke="#10209a" stroke-width="0.9"/>
<rect x="54.50" y="183.90" width="4" height="3.4" fill="#22d8f0" stroke="#10209a" stroke-width="0.9"/>
<rect x="61.1" y="178.7" width="41.1" height="9.4" fill="#3399ff"/>
<path d="M61.6,196.6 H70.4 M63.3,196.3 V192 M66,196.3 V189.8 M68.6,196.3 V192.2" stroke="#1428e0" stroke-width="1.1" fill="none"/>
<path d="M61.6,198.3 L70.4,202.8 L61.6,207.4Z" fill="#e80000"/>
<rect x="35.9" y="604.1" width="177.3" height="3" fill="#ececec"/>
<rect x="47.5" y="604.6" width="134.5" height="4" fill="#f4f4f4" stroke="#8e8e8e" stroke-width="0.8"/></svg>
</body></html>
